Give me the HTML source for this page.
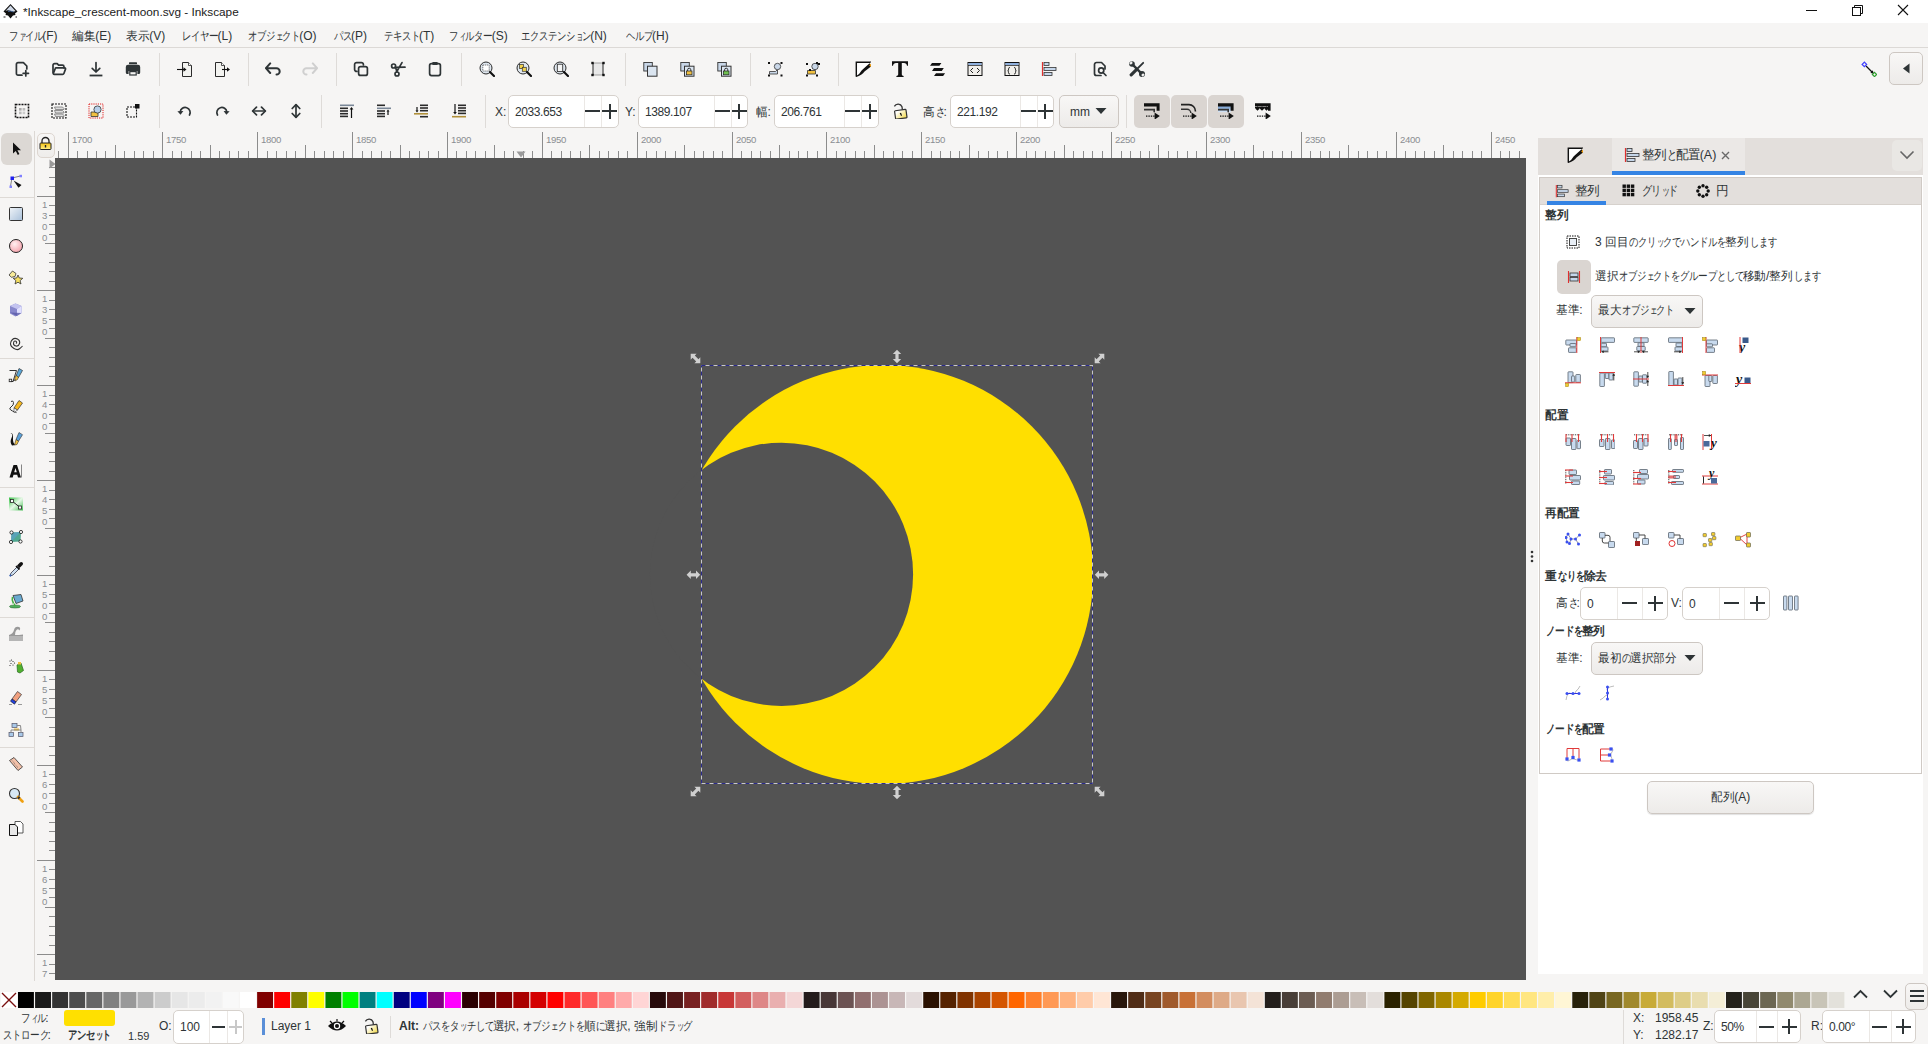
<!DOCTYPE html><html><head><meta charset="utf-8"><style>html,body{margin:0;padding:0}body{width:1928px;height:1044px;position:relative;overflow:hidden;background:#f6f5f4;font-family:"Liberation Sans",sans-serif}</style></head><body><div style="position:absolute;left:0px;top:0px;width:1928px;height:23px;background:#fff"></div>
<svg style="position:absolute;left:2px;top:3px" width="17" height="17" viewBox="0 0 17 17"><path d="M8.5 1 L1.5 8.5 L4 10.5 L3.5 12 L6 12.5 L8.5 15.5 L11 12.5 L13.5 12 L13 10.5 L15.5 8.5 Z" fill="#111"/>
<path d="M8.5 2.5 L3.5 8 Q6 6.5 8.5 8 Q11 9.5 13.5 8 Z" fill="#cfd8e6"/><path d="M6 8.5 Q8.5 7.5 11.5 9" stroke="#3a5a8a" stroke-width="1" fill="none"/>
<rect x="1.5" y="13.5" width="2" height="1" fill="#222"/><rect x="13.5" y="13.5" width="1.5" height="1" fill="#222"/></svg>
<div style="position:absolute;left:23px;top:4px;font-size:11.8px;line-height:16px;color:#1a1a1a;white-space:nowrap;">*Inkscape_crescent-moon.svg - Inkscape</div>
<div style="position:absolute;left:1806px;top:10px;width:11px;height:1px;background:#111"></div>
<svg style="position:absolute;left:1850px;top:3px" width="14" height="14" viewBox="0 0 14 14"><rect x="2.5" y="4.5" width="8" height="8" fill="none" stroke="#111" stroke-width="1"/><path d="M4.5 4.5V2.5H12.5V10.5H10.5" fill="none" stroke="#111" stroke-width="1"/></svg>
<svg style="position:absolute;left:1897px;top:4px" width="12" height="12" viewBox="0 0 12 12"><path d="M1 1L11 11M11 1L1 11" stroke="#111" stroke-width="1.1"/></svg>
<div style="position:absolute;left:8px;top:28px;font-size:12px;line-height:16px;color:#2e3436;white-space:nowrap;"><span style="display:inline-block;width:9.00px;text-align:center"><span style="display:inline-block;transform:scaleX(0.78)">フ</span></span><span style="display:inline-block;width:7.20px;text-align:center"><span style="display:inline-block;transform:scaleX(0.62)">ァ</span></span><span style="display:inline-block;width:9.00px;text-align:center"><span style="display:inline-block;transform:scaleX(0.78)">イ</span></span><span style="display:inline-block;width:9.00px;text-align:center"><span style="display:inline-block;transform:scaleX(0.78)">ル</span></span>(F)</div>
<div style="position:absolute;left:72px;top:28px;font-size:12px;line-height:16px;color:#2e3436;white-space:nowrap;"><span style="display:inline-block;width:11.60px;text-align:center"><span style="display:inline-block;transform:scaleX(0.97)">編</span></span><span style="display:inline-block;width:11.60px;text-align:center"><span style="display:inline-block;transform:scaleX(0.97)">集</span></span>(E)</div>
<div style="position:absolute;left:126px;top:28px;font-size:12px;line-height:16px;color:#2e3436;white-space:nowrap;"><span style="display:inline-block;width:11.60px;text-align:center"><span style="display:inline-block;transform:scaleX(0.97)">表</span></span><span style="display:inline-block;width:11.60px;text-align:center"><span style="display:inline-block;transform:scaleX(0.97)">示</span></span>(V)</div>
<div style="position:absolute;left:181px;top:28px;font-size:12px;line-height:16px;color:#2e3436;white-space:nowrap;"><span style="display:inline-block;width:9.00px;text-align:center"><span style="display:inline-block;transform:scaleX(0.78)">レ</span></span><span style="display:inline-block;width:9.00px;text-align:center"><span style="display:inline-block;transform:scaleX(0.78)">イ</span></span><span style="display:inline-block;width:9.00px;text-align:center"><span style="display:inline-block;transform:scaleX(0.78)">ヤ</span></span><span style="display:inline-block;width:9.50px;text-align:center"><span style="display:inline-block;transform:scaleX(0.8)">ー</span></span>(L)</div>
<div style="position:absolute;left:247px;top:28px;font-size:12px;line-height:16px;color:#2e3436;white-space:nowrap;"><span style="display:inline-block;width:9.00px;text-align:center"><span style="display:inline-block;transform:scaleX(0.78)">オ</span></span><span style="display:inline-block;width:9.00px;text-align:center"><span style="display:inline-block;transform:scaleX(0.78)">ブ</span></span><span style="display:inline-block;width:9.00px;text-align:center"><span style="display:inline-block;transform:scaleX(0.78)">ジ</span></span><span style="display:inline-block;width:7.20px;text-align:center"><span style="display:inline-block;transform:scaleX(0.62)">ェ</span></span><span style="display:inline-block;width:9.00px;text-align:center"><span style="display:inline-block;transform:scaleX(0.78)">ク</span></span><span style="display:inline-block;width:9.00px;text-align:center"><span style="display:inline-block;transform:scaleX(0.78)">ト</span></span>(O)</div>
<div style="position:absolute;left:333px;top:28px;font-size:12px;line-height:16px;color:#2e3436;white-space:nowrap;"><span style="display:inline-block;width:9.00px;text-align:center"><span style="display:inline-block;transform:scaleX(0.78)">パ</span></span><span style="display:inline-block;width:9.00px;text-align:center"><span style="display:inline-block;transform:scaleX(0.78)">ス</span></span>(P)</div>
<div style="position:absolute;left:383px;top:28px;font-size:12px;line-height:16px;color:#2e3436;white-space:nowrap;"><span style="display:inline-block;width:9.00px;text-align:center"><span style="display:inline-block;transform:scaleX(0.78)">テ</span></span><span style="display:inline-block;width:9.00px;text-align:center"><span style="display:inline-block;transform:scaleX(0.78)">キ</span></span><span style="display:inline-block;width:9.00px;text-align:center"><span style="display:inline-block;transform:scaleX(0.78)">ス</span></span><span style="display:inline-block;width:9.00px;text-align:center"><span style="display:inline-block;transform:scaleX(0.78)">ト</span></span>(T)</div>
<div style="position:absolute;left:448px;top:28px;font-size:12px;line-height:16px;color:#2e3436;white-space:nowrap;"><span style="display:inline-block;width:9.00px;text-align:center"><span style="display:inline-block;transform:scaleX(0.78)">フ</span></span><span style="display:inline-block;width:7.20px;text-align:center"><span style="display:inline-block;transform:scaleX(0.62)">ィ</span></span><span style="display:inline-block;width:9.00px;text-align:center"><span style="display:inline-block;transform:scaleX(0.78)">ル</span></span><span style="display:inline-block;width:9.00px;text-align:center"><span style="display:inline-block;transform:scaleX(0.78)">タ</span></span><span style="display:inline-block;width:9.50px;text-align:center"><span style="display:inline-block;transform:scaleX(0.8)">ー</span></span>(S)</div>
<div style="position:absolute;left:520px;top:28px;font-size:12px;line-height:16px;color:#2e3436;white-space:nowrap;"><span style="display:inline-block;width:9.00px;text-align:center"><span style="display:inline-block;transform:scaleX(0.78)">エ</span></span><span style="display:inline-block;width:9.00px;text-align:center"><span style="display:inline-block;transform:scaleX(0.78)">ク</span></span><span style="display:inline-block;width:9.00px;text-align:center"><span style="display:inline-block;transform:scaleX(0.78)">ス</span></span><span style="display:inline-block;width:9.00px;text-align:center"><span style="display:inline-block;transform:scaleX(0.78)">テ</span></span><span style="display:inline-block;width:9.00px;text-align:center"><span style="display:inline-block;transform:scaleX(0.78)">ン</span></span><span style="display:inline-block;width:9.00px;text-align:center"><span style="display:inline-block;transform:scaleX(0.78)">シ</span></span><span style="display:inline-block;width:7.20px;text-align:center"><span style="display:inline-block;transform:scaleX(0.62)">ョ</span></span><span style="display:inline-block;width:9.00px;text-align:center"><span style="display:inline-block;transform:scaleX(0.78)">ン</span></span>(N)</div>
<div style="position:absolute;left:625px;top:28px;font-size:12px;line-height:16px;color:#2e3436;white-space:nowrap;"><span style="display:inline-block;width:9.00px;text-align:center"><span style="display:inline-block;transform:scaleX(0.78)">ヘ</span></span><span style="display:inline-block;width:9.00px;text-align:center"><span style="display:inline-block;transform:scaleX(0.78)">ル</span></span><span style="display:inline-block;width:9.00px;text-align:center"><span style="display:inline-block;transform:scaleX(0.78)">プ</span></span>(H)</div>
<div style="position:absolute;left:0px;top:47px;width:1928px;height:1px;background:#dcd9d6"></div>
<div style="position:absolute;left:159px;top:53px;width:1px;height:33px;background:#dedbd8"></div>
<div style="position:absolute;left:248px;top:53px;width:1px;height:33px;background:#dedbd8"></div>
<div style="position:absolute;left:336px;top:53px;width:1px;height:33px;background:#dedbd8"></div>
<div style="position:absolute;left:461px;top:53px;width:1px;height:33px;background:#dedbd8"></div>
<div style="position:absolute;left:625px;top:53px;width:1px;height:33px;background:#dedbd8"></div>
<div style="position:absolute;left:750px;top:53px;width:1px;height:33px;background:#dedbd8"></div>
<div style="position:absolute;left:838px;top:53px;width:1px;height:33px;background:#dedbd8"></div>
<div style="position:absolute;left:1075px;top:53px;width:1px;height:33px;background:#dedbd8"></div>
<div style="position:absolute;left:159px;top:95px;width:1px;height:33px;background:#dedbd8"></div>
<div style="position:absolute;left:321px;top:95px;width:1px;height:33px;background:#dedbd8"></div>
<div style="position:absolute;left:485px;top:95px;width:1px;height:33px;background:#dedbd8"></div>
<div style="position:absolute;left:1126px;top:95px;width:1px;height:33px;background:#dedbd8"></div>
<svg style="position:absolute;left:14px;top:61px" width="16" height="16" viewBox="0 0 16 16"><path d="M8 14.2H4a1.6 1.6 0 0 1-1.6-1.6V3.2A1.6 1.6 0 0 1 4 1.6h5.4l3.4 3.4V8" fill="none" stroke="#2e3436" stroke-width="1.7" stroke-linecap="round" stroke-linejoin="round"/><path d="M11.8 9.6v5.4M9.1 12.3h5.4" fill="none" stroke="#2e3436" stroke-width="1.7" stroke-linecap="round" stroke-linejoin="round"/></svg>
<svg style="position:absolute;left:51px;top:61px" width="16" height="16" viewBox="0 0 16 16"><path d="M2 11.5V4.2A1.6 1.6 0 0 1 3.6 2.6h2.6l1.4 1.5h3.8A1.6 1.6 0 0 1 13 5.7v1.2" fill="none" stroke="#2e3436" stroke-width="1.7" stroke-linecap="round" stroke-linejoin="round"/><path d="M2.2 12.6l2-5a1 1 0 0 1 .9-.7h8.6a.9.9 0 0 1 .8 1.2l-1.6 4.4a1.4 1.4 0 0 1-1.3.9H3.6a1.4 1.4 0 0 1-1.4-.8z" fill="none" stroke="#2e3436" stroke-width="1.7" stroke-linecap="round" stroke-linejoin="round"/></svg>
<svg style="position:absolute;left:88px;top:61px" width="16" height="16" viewBox="0 0 16 16"><path d="M8 1.5v9.5M4.2 7.4L8 11l3.8-3.6" fill="none" stroke="#2e3436" stroke-width="1.7" stroke-linecap="round" stroke-linejoin="round"/><path d="M1.6 14.5h12.8" stroke="#2e3436" stroke-width="1.8"/></svg>
<svg style="position:absolute;left:125px;top:61px" width="16" height="16" viewBox="0 0 16 16"><rect x="4" y="1.2" width="8" height="2" rx=".5" fill="#2e3436"/><path d="M3 3.8h10a2.2 2.2 0 0 1 2.2 2.2v5.5a1.5 1.5 0 0 1-1.5 1.5h-1.3v-3H3.6v3H2.3A1.5 1.5 0 0 1 .8 11.5V6A2.2 2.2 0 0 1 3 3.8z" fill="#2e3436"/><rect x="4.8" y="10.6" width="6.4" height="3.4" fill="none" stroke="#2e3436" stroke-width="1.2"/></svg>
<svg style="position:absolute;left:177px;top:61px" width="16" height="16" viewBox="0 0 16 16"><g transform="translate(1,0)"><path d="M4.5 1.5h6l3 3v11h-9z" fill="#f3f3f0" stroke="#2b2b2b" stroke-width="1"/><path d="M10.5 1.5v3h3" fill="#fff" stroke="#2b2b2b" stroke-width=".8"/></g><path d="M0 8.5h8" stroke="#111" stroke-width="1.1"/><path d="M6.5 6.2l3 2.3-3 2.3z" fill="#111"/></svg>
<svg style="position:absolute;left:214px;top:61px" width="16" height="16" viewBox="0 0 16 16"><g transform="translate(-3,0)"><path d="M4.5 1.5h6l3 3v11h-9z" fill="#f3f3f0" stroke="#2b2b2b" stroke-width="1"/><path d="M10.5 1.5v3h3" fill="#fff" stroke="#2b2b2b" stroke-width=".8"/></g><path d="M8 8.5h6" stroke="#111" stroke-width="1.1"/><path d="M13 6.2l3 2.3-3 2.3z" fill="#111"/></svg>
<svg style="position:absolute;left:265px;top:61px" width="16" height="16" viewBox="0 0 16 16"><path d="M5.2 2.4L0.9 7.2l4.3 4.8M1.2 7.2h10.3a3.2 3.2 0 0 1 0 6.4" fill="none" stroke="#2e3436" stroke-width="2" stroke-linecap="round" stroke-linejoin="round"/></svg>
<svg style="position:absolute;left:302px;top:61px" width="16" height="16" viewBox="0 0 16 16"><g transform="translate(16,0) scale(-1,1)"><path d="M5.2 2.4L0.9 7.2l4.3 4.8M1.2 7.2h10.3a3.2 3.2 0 0 1 0 6.4" fill="none" stroke="#cfcfcf" stroke-width="2" stroke-linecap="round" stroke-linejoin="round"/></g></svg>
<svg style="position:absolute;left:353px;top:61px" width="16" height="16" viewBox="0 0 16 16"><rect x="5.6" y="5.6" width="8.8" height="8.8" rx="2" fill="none" stroke="#2e3436" stroke-width="1.7" stroke-linecap="round" stroke-linejoin="round"/><path d="M4 10.4H3.6A2 2 0 0 1 1.6 8.4V3.6A2 2 0 0 1 3.6 1.6h4.8a2 2 0 0 1 2 2V4" fill="none" stroke="#2e3436" stroke-width="1.7" stroke-linecap="round" stroke-linejoin="round"/></svg>
<svg style="position:absolute;left:390px;top:61px" width="16" height="16" viewBox="0 0 16 16"><circle cx="3.6" cy="5" r="2" fill="none" stroke="#2e3436" stroke-width="1.7" stroke-linecap="round" stroke-linejoin="round" stroke-width="1.5"/><circle cx="7" cy="13" r="2" fill="none" stroke="#2e3436" stroke-width="1.7" stroke-linecap="round" stroke-linejoin="round" stroke-width="1.5"/><path d="M5.2 6.3L15 6.2M6.5 11L12 1.6M5.6 6.6L7 11" fill="none" stroke="#2e3436" stroke-width="1.7" stroke-linecap="round" stroke-linejoin="round" stroke-width="1.5"/></svg>
<svg style="position:absolute;left:427px;top:61px" width="16" height="16" viewBox="0 0 16 16"><rect x="2.6" y="2.6" width="10.8" height="12" rx="2" fill="none" stroke="#2e3436" stroke-width="1.7" stroke-linecap="round" stroke-linejoin="round"/><rect x="5.2" y="1" width="5.6" height="3" rx="1" fill="#2e3436"/></svg>
<svg style="position:absolute;left:479px;top:61px" width="16" height="16" viewBox="0 0 16 16"><circle cx="7" cy="7" r="6" fill="#dfe7ef" stroke="#2b2b2b" stroke-width="1"/><rect x="3.8" y="4" width="6.4" height="6" fill="#fff" stroke="#333" stroke-width=".8" stroke-dasharray="1 1"/><path d="M11 11l4 4" stroke="#111" stroke-width="2.2" stroke-linecap="round"/></svg>
<svg style="position:absolute;left:516px;top:61px" width="16" height="16" viewBox="0 0 16 16"><circle cx="7" cy="7" r="6" fill="#dfe7ef" stroke="#2b2b2b" stroke-width="1"/><rect x="3.5" y="3.5" width="4" height="4" fill="#f2d24a" stroke="#333" stroke-width=".7"/><rect x="6.3" y="6.3" width="4" height="4" fill="#f2d24a" stroke="#333" stroke-width=".7"/><path d="M11 11l4 4" stroke="#111" stroke-width="2.2" stroke-linecap="round"/></svg>
<svg style="position:absolute;left:553px;top:61px" width="16" height="16" viewBox="0 0 16 16"><circle cx="7" cy="7" r="6" fill="#dfe7ef" stroke="#2b2b2b" stroke-width="1"/><rect x="4.3" y="3.2" width="5.4" height="7.4" fill="#f6f6f6" stroke="#333" stroke-width=".9"/><path d="M11 11l4 4" stroke="#111" stroke-width="2.2" stroke-linecap="round"/></svg>
<svg style="position:absolute;left:590px;top:61px" width="16" height="16" viewBox="0 0 16 16"><rect x="3" y="2" width="10" height="12" fill="#e8e8e8" stroke="#666" stroke-width=".6"/><path d="M3 2v12M13 2v12" stroke="#333" stroke-width=".8"/><rect x="1.3" y="0.8" width="2.4" height="2.4" fill="#111"/><rect x="12.3" y="0.8" width="2.4" height="2.4" fill="#111"/><rect x="1.3" y="12.8" width="2.4" height="2.4" fill="#111"/><rect x="12.3" y="12.8" width="2.4" height="2.4" fill="#111"/></svg>
<svg style="position:absolute;left:642px;top:61px" width="16" height="16" viewBox="0 0 16 16"><rect x="1.8" y="1.5" width="8.5" height="8.5" fill="#c9d7e8" stroke="#333" stroke-width=".9"/><rect x="5.5" y="5.2" width="9.5" height="10" fill="#dbe5f0" stroke="#333" stroke-width="1"/></svg>
<svg style="position:absolute;left:679px;top:61px" width="16" height="16" viewBox="0 0 16 16"><rect x="1.8" y="1.5" width="8.5" height="8.5" fill="#c9d7e8" stroke="#333" stroke-width=".9"/><rect x="5.5" y="5.2" width="9.5" height="10" fill="#dbe5f0" stroke="#333" stroke-width="1"/><rect x="7.4" y="10" width="5.6" height="3.8" fill="#f0c040" stroke="#222" stroke-width=".7"/><path d="M8.6 10V8.8a1.6 1.6 0 0 1 3.2 0V10" fill="none" stroke="#222" stroke-width=".9"/></svg>
<svg style="position:absolute;left:716px;top:61px" width="16" height="16" viewBox="0 0 16 16"><rect x="1.8" y="1.5" width="8.5" height="8.5" fill="#c9d7e8" stroke="#333" stroke-width=".9"/><rect x="5.5" y="5.2" width="9.5" height="10" fill="#dbe5f0" stroke="#333" stroke-width="1"/><rect x="7.4" y="10" width="5.6" height="3.8" fill="#70c050" stroke="#222" stroke-width=".7"/><path d="M8.6 10V8.8a1.6 1.6 0 0 1 3.2 0V10" fill="none" stroke="#222" stroke-width=".9"/></svg>
<svg style="position:absolute;left:767px;top:61px" width="16" height="16" viewBox="0 0 16 16"><path d="M2.5 10.5h6l2-2V13h-8z" fill="#c9d7e8" stroke="#333" stroke-width=".8"/><circle cx="10.5" cy="5.5" r="3.2" fill="#c9d7e8" stroke="#333" stroke-width=".8"/><rect x="1" y="1" width="2" height="2" fill="#111"/><rect x="13.5" y="1" width="2" height="2" fill="#111"/><rect x="1" y="13.5" width="2" height="2" fill="#111"/><rect x="13.5" y="13.5" width="2" height="2" fill="#111"/></svg>
<svg style="position:absolute;left:805px;top:61px" width="16" height="16" viewBox="0 0 16 16"><path d="M2.5 9.5h8V13h-8z" fill="#f0c040" stroke="#333" stroke-width=".8"/><circle cx="10" cy="5.5" r="3.2" fill="#c9d7e8" stroke="#333" stroke-width=".8"/><rect x="1" y="2" width="2" height="2" fill="#111"/><rect x="13" y="2" width="2" height="2" fill="#111"/><rect x="1" y="13.5" width="2" height="2" fill="#111"/><rect x="11" y="13.5" width="2" height="2" fill="#111"/><rect x="11" y="1" width="2" height="2" fill="#111"/><rect x="4" y="8" width="2" height="2" fill="#111"/></svg>
<svg style="position:absolute;left:855px;top:61px" width="16" height="16" viewBox="0 0 16 16"><path d="M0.6 0.4h15.8l-1.2 1.6H2.1v13.6H0.6z" fill="#111"/><path d="M2.1 2h13.1L2.1 15.2z" fill="#fff"/><path d="M14.6 2.2L16.4 5.2 9.5 10.5Q7 14.5 1 15.9L.8 15.2Q5 12.8 6.8 9.2z" fill="#111"/><path d="M14.2 4.6l2.3-2.6v4.4z" fill="#f5a010"/></svg>
<svg style="position:absolute;left:892px;top:61px" width="16" height="16" viewBox="0 0 16 16"><path d="M0 0.2h16v4.6h-1Q14.5 2 12 2H9.8v11.4q0 1.3 1.8 1.5v1.1H4.4v-1.1q1.8-.2 1.8-1.5V2H4Q1.5 2 1 4.8H0z" fill="#111"/></svg>
<svg style="position:absolute;left:930px;top:61px" width="16" height="16" viewBox="0 0 16 16"><path d="M2 2H11.4L9.4 4.8H0z M4 7.1h9.8l-2 2.9H2z M6 12.2h9.1l-2 2.9H4z" fill="#111"/></svg>
<svg style="position:absolute;left:967px;top:61px" width="16" height="16" viewBox="0 0 16 16"><rect x="1" y="1.5" width="14" height="13" fill="#f1efeb" stroke="#111" stroke-width="1"/><rect x="1.5" y="2" width="13" height="2" fill="#8fb0dd"/><path d="M1 4.5h14" stroke="#111" stroke-width=".7"/><path d="M6 7l-2.5 2.5L6 12M10 7l2.5 2.5L10 12" fill="none" stroke="#222" stroke-width="1"/></svg>
<svg style="position:absolute;left:1004px;top:61px" width="16" height="16" viewBox="0 0 16 16"><rect x="1" y="1.5" width="14" height="13" fill="#f1efeb" stroke="#111" stroke-width="1"/><rect x="1.5" y="2" width="13" height="2" fill="#8fb0dd"/><path d="M1 4.5h14" stroke="#111" stroke-width=".7"/><path d="M6 6.5q-1.5 0-1.5 1.3v1.2q0 .8-.8.8.8 0 .8.8v1.2q0 1.3 1.5 1.3M10 6.5q1.5 0 1.5 1.3v1.2q0 .8.8.8-.8 0-.8.8v1.2q0 1.3-1.5 1.3" fill="none" stroke="#222" stroke-width=".9"/></svg>
<svg style="position:absolute;left:1041px;top:61px" width="16" height="16" viewBox="0 0 16 16"><path d="M1.5 1v14" stroke="#e03030" stroke-width="1.2"/><rect x="3" y="1.5" width="5" height="3" fill="#c5d6ea" stroke="#333" stroke-width=".8"/><rect x="3" y="6.5" width="12" height="3" fill="#c5d6ea" stroke="#333" stroke-width=".8"/><rect x="3" y="11.5" width="8" height="3" fill="#c5d6ea" stroke="#333" stroke-width=".8"/></svg>
<svg style="position:absolute;left:1092px;top:61px" width="16" height="16" viewBox="0 0 16 16"><path d="M9 14.5H4.5a2 2 0 0 1-2-2v-9a2 2 0 0 1 2-2h5l3.5 3.5v3" fill="none" stroke="#2e3436" stroke-width="1.7" stroke-linecap="round" stroke-linejoin="round"/><circle cx="9.2" cy="9.5" r="2.6" fill="none" stroke="#2e3436" stroke-width="1.7" stroke-linecap="round" stroke-linejoin="round" stroke-width="1.6"/><path d="M11 11.5l3 3" fill="none" stroke="#2e3436" stroke-width="1.7" stroke-linecap="round" stroke-linejoin="round" stroke-width="1.8"/></svg>
<svg style="position:absolute;left:1129px;top:61px" width="16" height="16" viewBox="0 0 16 16"><path d="M3.2 3.2L12.8 12.8" stroke="#2e3436" stroke-width="2.4" stroke-linecap="round"/><circle cx="3" cy="3" r="2.8" fill="#2e3436"/><circle cx="13" cy="13" r="3" fill="#2e3436"/><path d="M.3 2.2L2.2 .3 3.8 1.9 1.9 3.8z" fill="#f6f5f4"/><path d="M15.7 13.8L13.8 15.7 12.2 14.1 14.1 12.2z" fill="#f6f5f4"/><path d="M2.2 13.8L7.2 8.8" stroke="#2e3436" stroke-width="3.2" stroke-linecap="round"/><path d="M7 9L14.2 1.8" stroke="#2e3436" stroke-width="1.8" stroke-linecap="round"/></svg>
<svg style="position:absolute;left:1861px;top:61px" width="16" height="16" viewBox="0 0 16 16"><path d="M5 5l7 7" stroke="#111" stroke-width="1.2"/><path d="M12.5 12.5l-3.2-.6 2.6-2.6z" fill="#111"/><rect x="1.8" y="1.8" width="3.2" height="3.2" transform="rotate(45 3.4 3.4)" fill="none" stroke="#4040ff" stroke-width="1.2"/><rect x="12" y="12" width="3" height="3" transform="rotate(45 13.5 13.5)" fill="none" stroke="#30a030" stroke-width="1.2"/></svg>
<div style="position:absolute;left:1889px;top:52px;width:34px;height:33px;background:linear-gradient(#f8f7f6,#edebe9);border:1px solid #cdc7c2;border-radius:5px;box-sizing:border-box"></div>
<svg style="position:absolute;left:1900px;top:62px" width="12" height="13" viewBox="0 0 12 13"><path d="M9.5 1.5L3 6.5l6.5 5z" fill="#2e3436"/></svg>
<svg style="position:absolute;left:14px;top:103px" width="16" height="16" viewBox="0 0 16 16"><rect x="1.5" y="1.5" width="13" height="13" fill="none" stroke="#111" stroke-width="1.6" stroke-dasharray="2 1"/><rect x="5" y="5" width="2.6" height="2.6" fill="#aaa"/><rect x="8.6" y="5" width="2.6" height="2.6" fill="#bbb"/><rect x="5" y="8.6" width="2.6" height="2.6" fill="#bbb"/><rect x="8.6" y="8.6" width="2.6" height="2.6" fill="#ccc"/></svg>
<svg style="position:absolute;left:51px;top:103px" width="16" height="16" viewBox="0 0 16 16"><rect x="1" y="1" width="14" height="14" fill="none" stroke="#111" stroke-width="1.1" stroke-dasharray="2 1"/><path d="M3.5 4h8l1.5 1.5v1H4.5zM3.5 7.5h8l1.5 1.5v1H4.5zM3.5 11h8l1.5 1.5v1H4.5z" fill="#ddd" stroke="#555" stroke-width=".6"/></svg>
<svg style="position:absolute;left:88px;top:103px" width="16" height="16" viewBox="0 0 16 16"><rect x="1" y="1" width="14" height="14" fill="none" stroke="#e02020" stroke-width="1" stroke-dasharray="1.2 1"/><path d="M3 9h6l1 1v3.5H3z" fill="#f0c040" stroke="#333" stroke-width=".8"/><circle cx="9.5" cy="6.5" r="3.6" fill="#b8d0ea" stroke="#333" stroke-width=".8"/></svg>
<svg style="position:absolute;left:125px;top:103px" width="16" height="16" viewBox="0 0 16 16"><rect x="2" y="4" width="9.5" height="10" fill="none" stroke="#111" stroke-width="1.1" stroke-dasharray="2 1"/><rect x="10" y="1" width="4.5" height="4.5" fill="#111"/></svg>
<svg style="position:absolute;left:177px;top:103px" width="16" height="16" viewBox="0 0 16 16"><path d="M3.2 9A5 5 0 1 1 12.5 12" fill="none" stroke="#2e3436" stroke-width="1.7" stroke-linecap="round" stroke-linejoin="round" stroke-width="2"/><path d="M.4 8.2l3.2 3.6 2.8-3.8z" fill="#2e3436"/></svg>
<svg style="position:absolute;left:214px;top:103px" width="16" height="16" viewBox="0 0 16 16"><g transform="translate(16,0) scale(-1,1)"><path d="M3.2 9A5 5 0 1 1 12.5 12" fill="none" stroke="#2e3436" stroke-width="1.7" stroke-linecap="round" stroke-linejoin="round" stroke-width="2"/><path d="M.4 8.2l3.2 3.6 2.8-3.8z" fill="#2e3436"/></g></svg>
<svg style="position:absolute;left:251px;top:103px" width="16" height="16" viewBox="0 0 16 16"><path d="M2 8h12" fill="none" stroke="#2e3436" stroke-width="1.7" stroke-linecap="round" stroke-linejoin="round" stroke-width="2"/><path d="M5.5 4.2L1.6 8l3.9 3.8M10.5 4.2L14.4 8l-3.9 3.8" fill="none" stroke="#2e3436" stroke-width="1.7" stroke-linecap="round" stroke-linejoin="round" stroke-width="2"/></svg>
<svg style="position:absolute;left:288px;top:103px" width="16" height="16" viewBox="0 0 16 16"><g transform="rotate(90 8 8)"><path d="M2 8h12" fill="none" stroke="#2e3436" stroke-width="1.7" stroke-linecap="round" stroke-linejoin="round" stroke-width="2"/><path d="M5.5 4.2L1.6 8l3.9 3.8M10.5 4.2L14.4 8l-3.9 3.8" fill="none" stroke="#2e3436" stroke-width="1.7" stroke-linecap="round" stroke-linejoin="round" stroke-width="2"/></g></svg>
<svg style="position:absolute;left:339px;top:103px" width="16" height="16" viewBox="0 0 16 16"><rect x="1" y="1.5" width="14" height="1.6" fill="#7a8797"/><rect x="1" y="4.5" width="8" height="1.6" fill="#2a2a2a"/><rect x="1" y="7.2" width="8" height="1.6" fill="#2a2a2a"/><rect x="1" y="9.9" width="8" height="1.6" fill="#2a2a2a"/><rect x="1" y="12.6" width="8" height="1.6" fill="#2a2a2a"/><path d="M12.5 15V5" stroke="#111" stroke-width="1.2"/><path d="M10.6 6.5l1.9-2.6 1.9 2.6z" fill="#111"/></svg>
<svg style="position:absolute;left:376px;top:103px" width="16" height="16" viewBox="0 0 16 16"><rect x="1" y="1.5" width="8" height="1.6" fill="#2a2a2a"/><rect x="1" y="4.5" width="14" height="1.6" fill="#7a8797"/><rect x="1" y="9.9" width="8" height="1.6" fill="#2a2a2a"/><rect x="1" y="12.6" width="8" height="1.6" fill="#2a2a2a"/><rect x="1" y="7.2" width="8" height="1.6" fill="#2a2a2a"/><path d="M12 12V8" stroke="#111" stroke-width="1.2"/><path d="M10.5 8.5l1.5-2 1.5 2z" fill="#111"/></svg>
<svg style="position:absolute;left:413px;top:103px" width="16" height="16" viewBox="0 0 16 16"><rect x="7" y="1.5" width="8" height="1.6" fill="#2a2a2a"/><rect x="7" y="4.2" width="8" height="1.6" fill="#2a2a2a"/><rect x="7" y="6.9" width="8" height="1.6" fill="#2a2a2a"/><rect x="1" y="10" width="14" height="1.6" fill="#b0903a"/><rect x="7" y="12.9" width="8" height="1.6" fill="#2a2a2a"/><path d="M4 4v4" stroke="#111" stroke-width="1.2"/><path d="M2.5 7.5l1.5 2 1.5-2z" fill="#111"/></svg>
<svg style="position:absolute;left:451px;top:103px" width="16" height="16" viewBox="0 0 16 16"><rect x="7" y="1.5" width="8" height="1.6" fill="#2a2a2a"/><rect x="7" y="4.2" width="8" height="1.6" fill="#2a2a2a"/><rect x="7" y="6.9" width="8" height="1.6" fill="#2a2a2a"/><rect x="7" y="9.6" width="8" height="1.6" fill="#2a2a2a"/><rect x="1" y="12.9" width="14" height="1.6" fill="#b0903a"/><path d="M4 1v9" stroke="#111" stroke-width="1.2"/><path d="M2.2 9l1.8 2.6L5.8 9z" fill="#111"/></svg>
<svg style="position:absolute;left:893px;top:103px" width="16" height="16" viewBox="0 0 16 16"><defs><linearGradient id="ulg" x1="0" y1="0" x2="1" y2="1"><stop offset=".2" stop-color="#ffffff"/><stop offset="1" stop-color="#f2d840"/></linearGradient></defs><g transform="rotate(-8 8 11)"><rect x="2" y="7" width="11.5" height="8.5" rx=".8" fill="url(#ulg)" stroke="#333" stroke-width="1.2"/><path d="M2.5 2.5a4.2 4.2 0 0 1 7.5 1.5V7" fill="none" stroke="#333" stroke-width="1.3"/><path d="M6.8 10l1.4-.3.6 3-1 .2z" fill="#111"/></g></svg>
<div style="position:absolute;left:495px;top:104px;font-size:12px;line-height:16px;color:#2e3436;white-space:nowrap;">X:</div>
<div style="position:absolute;left:508px;top:95px;width:111px;height:33px;background:#fff;border:1px solid #d6d1cc;border-radius:5px;box-sizing:border-box"></div>
<div style="position:absolute;left:584px;top:96px;width:1px;height:31px;background:#ebe8e5"></div>
<div style="position:absolute;left:601px;top:96px;width:1px;height:31px;background:#ebe8e5"></div>
<div style="position:absolute;left:515px;top:104px;font-size:12px;line-height:16px;color:#2e3436;white-space:nowrap;letter-spacing:-0.4px">2033.653</div>
<div style="position:absolute;left:585px;top:110px;width:15px;height:2px;background:#2e3436"></div>
<div style="position:absolute;left:602px;top:110px;width:15px;height:2px;background:#2e3436"></div>
<div style="position:absolute;left:609px;top:104px;width:2px;height:15px;background:#2e3436"></div>
<div style="position:absolute;left:625px;top:104px;font-size:12px;line-height:16px;color:#2e3436;white-space:nowrap;">Y:</div>
<div style="position:absolute;left:638px;top:95px;width:110px;height:33px;background:#fff;border:1px solid #d6d1cc;border-radius:5px;box-sizing:border-box"></div>
<div style="position:absolute;left:714px;top:96px;width:1px;height:31px;background:#ebe8e5"></div>
<div style="position:absolute;left:731px;top:96px;width:1px;height:31px;background:#ebe8e5"></div>
<div style="position:absolute;left:645px;top:104px;font-size:12px;line-height:16px;color:#2e3436;white-space:nowrap;letter-spacing:-0.4px">1389.107</div>
<div style="position:absolute;left:715px;top:110px;width:15px;height:2px;background:#2e3436"></div>
<div style="position:absolute;left:732px;top:110px;width:15px;height:2px;background:#2e3436"></div>
<div style="position:absolute;left:738px;top:104px;width:2px;height:15px;background:#2e3436"></div>
<div style="position:absolute;left:756px;top:104px;font-size:12px;line-height:16px;color:#2e3436;white-space:nowrap;"><span style="display:inline-block;width:11.60px;text-align:center"><span style="display:inline-block;transform:scaleX(0.97)">幅</span></span>:</div>
<div style="position:absolute;left:774px;top:95px;width:105px;height:33px;background:#fff;border:1px solid #d6d1cc;border-radius:5px;box-sizing:border-box"></div>
<div style="position:absolute;left:844px;top:96px;width:1px;height:31px;background:#ebe8e5"></div>
<div style="position:absolute;left:861px;top:96px;width:1px;height:31px;background:#ebe8e5"></div>
<div style="position:absolute;left:781px;top:104px;font-size:12px;line-height:16px;color:#2e3436;white-space:nowrap;letter-spacing:-0.4px">206.761</div>
<div style="position:absolute;left:845px;top:110px;width:15px;height:2px;background:#2e3436"></div>
<div style="position:absolute;left:862px;top:110px;width:15px;height:2px;background:#2e3436"></div>
<div style="position:absolute;left:869px;top:104px;width:2px;height:15px;background:#2e3436"></div>
<div style="position:absolute;left:923px;top:104px;font-size:12px;line-height:16px;color:#2e3436;white-space:nowrap;"><span style="display:inline-block;width:11.60px;text-align:center"><span style="display:inline-block;transform:scaleX(0.97)">高</span></span><span style="display:inline-block;width:9.00px;text-align:center"><span style="display:inline-block;transform:scaleX(0.78)">さ</span></span>:</div>
<div style="position:absolute;left:950px;top:95px;width:104px;height:33px;background:#fff;border:1px solid #d6d1cc;border-radius:5px;box-sizing:border-box"></div>
<div style="position:absolute;left:1020px;top:96px;width:1px;height:31px;background:#ebe8e5"></div>
<div style="position:absolute;left:1037px;top:96px;width:1px;height:31px;background:#ebe8e5"></div>
<div style="position:absolute;left:957px;top:104px;font-size:12px;line-height:16px;color:#2e3436;white-space:nowrap;letter-spacing:-0.4px">221.192</div>
<div style="position:absolute;left:1021px;top:110px;width:15px;height:2px;background:#2e3436"></div>
<div style="position:absolute;left:1038px;top:110px;width:15px;height:2px;background:#2e3436"></div>
<div style="position:absolute;left:1044px;top:104px;width:2px;height:15px;background:#2e3436"></div>
<div style="position:absolute;left:1059px;top:95px;width:60px;height:33px;background:linear-gradient(#f8f7f6,#edebe9);border:1px solid #cdc7c2;border-radius:5px;box-sizing:border-box"></div>
<div style="position:absolute;left:1070px;top:104px;font-size:12px;line-height:16px;color:#2e3436;white-space:nowrap;">mm</div>
<svg style="position:absolute;left:1095px;top:107px" width="12" height="8" viewBox="0 0 12 8"><path d="M0.5 1h11L6 7z" fill="#2e3436"/></svg>
<div style="position:absolute;left:1134px;top:95px;width:36px;height:33px;background:#dad5d1;border-radius:5px"></div>
<svg style="position:absolute;left:1144px;top:103px" width="16" height="16" viewBox="0 0 16 16"><path d="M0 0.3h15.6v7.4h-3V3.4H0z" fill="#111"/><path d="M0 5.7h11v3.5H9.4V7.4H0z" fill="#333"/><path d="M2 13.1h9" stroke="#111" stroke-width="1.3" stroke-dasharray="1.4 1"/><path d="M10.6 9.6l5.2 3.5-5.2 3.5z" fill="#111"/></svg>
<div style="position:absolute;left:1171px;top:95px;width:36px;height:33px;background:#dad5d1;border-radius:5px"></div>
<svg style="position:absolute;left:1181px;top:103px" width="16" height="16" viewBox="0 0 16 16"><path d="M0 1.6h8a6.4 6.4 0 0 1 6.4 6.4v.5" fill="none" stroke="#222" stroke-width="1.6"/><path d="M0 6.3h6a3.8 3.8 0 0 1 3.8 3.8" fill="none" stroke="#333" stroke-width="1.4"/><path d="M2 13.1h9" stroke="#111" stroke-width="1.3" stroke-dasharray="1.4 1"/><path d="M10.6 9.6l5.2 3.5-5.2 3.5z" fill="#111"/></svg>
<div style="position:absolute;left:1208px;top:95px;width:36px;height:33px;background:#dad5d1;border-radius:5px"></div>
<svg style="position:absolute;left:1218px;top:103px" width="16" height="16" viewBox="0 0 16 16"><defs><linearGradient id="t3g" x1="0" y1="0" x2="0" y2="1"><stop offset="0" stop-color="#6f9ad0"/><stop offset="1" stop-color="#d8e6f4"/></linearGradient></defs><rect x="0" y="3.2" width="12.8" height="6" fill="url(#t3g)"/><path d="M0 0.3h15.6v7.4h-3V3.4H0z" fill="#111"/><path d="M0 5.7h11v3.5H9.4V7.4H0z" fill="#333"/><path d="M2 13.1h9" stroke="#111" stroke-width="1.3" stroke-dasharray="1.4 1"/><path d="M10.6 9.6l5.2 3.5-5.2 3.5z" fill="#111"/></svg>
<svg style="position:absolute;left:1255px;top:103px" width="16" height="16" viewBox="0 0 16 16"><path d="M0 0.3h15.6v7.4h-2.6V3.4H0z" fill="#111"/><path d="M2.5 3.2l2.3 2.3-2.3 2.3-2.3-2.3z" fill="#111"/><path d="M7 3.2l2.3 2.3-2.3 2.3-2.3-2.3z" fill="#111"/><path d="M11.5 3.2l2.3 2.3-2.3 2.3-2.3-2.3z" fill="#111"/><path d="M0 4.5h13" stroke="#111" stroke-width="1"/><path d="M2 13.1h9" stroke="#111" stroke-width="1.3" stroke-dasharray="1.4 1"/><path d="M10.6 9.6l5.2 3.5-5.2 3.5z" fill="#111"/></svg>
<div style="position:absolute;left:34px;top:131px;width:1px;height:850px;background:#dcd8d4"></div>
<div style="position:absolute;left:37px;top:133px;width:18px;height:25px;background:linear-gradient(#f8f7f6,#eeecea);border:1px solid #ddd6d0;border-radius:5px;box-sizing:border-box"></div>
<svg style="position:absolute;left:38px;top:136px" width="15" height="15" viewBox="0 0 15 15"><defs><linearGradient id="lg" x1="0" y1="0" x2="0" y2="1"><stop offset="0" stop-color="#f4c010"/><stop offset="1" stop-color="#fff08a"/></linearGradient></defs><path d="M4 7V5a3.5 3.5 0 0 1 7 0v2" fill="none" stroke="#222" stroke-width="1.3"/><rect x="2" y="7" width="11" height="6.5" rx=".8" fill="url(#lg)" stroke="#222" stroke-width="1"/><path d="M7.5 9v2.5" stroke="#222" stroke-width="1.4"/></svg>
<svg style="position:absolute;left:0;top:0" width="1928" height="1044"><path d="M58.5 151V158M68.5 132V158M77.5 151V158M87.5 151V158M96.5 151V158M105.5 151V158M115.5 145V158M124.5 151V158M134.5 151V158M143.5 151V158M153.5 151V158M162.5 132V158M172.5 151V158M181.5 151V158M191.5 151V158M200.5 151V158M210.5 145V158M219.5 151V158M229.5 151V158M238.5 151V158M248.5 151V158M257.5 132V158M267.5 151V158M276.5 151V158M286.5 151V158M295.5 151V158M305.5 145V158M314.5 151V158M324.5 151V158M333.5 151V158M343.5 151V158M352.5 132V158M362.5 151V158M371.5 151V158M381.5 151V158M390.5 151V158M400.5 145V158M409.5 151V158M419.5 151V158M428.5 151V158M438.5 151V158M447.5 132V158M456.5 151V158M466.5 151V158M475.5 151V158M485.5 151V158M494.5 145V158M504.5 151V158M513.5 151V158M523.5 151V158M532.5 151V158M542.5 132V158M551.5 151V158M561.5 151V158M570.5 151V158M580.5 151V158M589.5 145V158M599.5 151V158M608.5 151V158M618.5 151V158M627.5 151V158M637.5 132V158M646.5 151V158M656.5 151V158M665.5 151V158M675.5 151V158M684.5 145V158M694.5 151V158M703.5 151V158M713.5 151V158M722.5 151V158M732.5 132V158M741.5 151V158M751.5 151V158M760.5 151V158M770.5 151V158M779.5 145V158M789.5 151V158M798.5 151V158M807.5 151V158M817.5 151V158M826.5 132V158M836.5 151V158M845.5 151V158M855.5 151V158M864.5 151V158M874.5 145V158M883.5 151V158M893.5 151V158M902.5 151V158M912.5 151V158M921.5 132V158M931.5 151V158M940.5 151V158M950.5 151V158M959.5 151V158M969.5 145V158M978.5 151V158M988.5 151V158M997.5 151V158M1007.5 151V158M1016.5 132V158M1026.5 151V158M1035.5 151V158M1045.5 151V158M1054.5 151V158M1064.5 145V158M1073.5 151V158M1083.5 151V158M1092.5 151V158M1102.5 151V158M1111.5 132V158M1121.5 151V158M1130.5 151V158M1140.5 151V158M1149.5 151V158M1158.5 145V158M1168.5 151V158M1177.5 151V158M1187.5 151V158M1196.5 151V158M1206.5 132V158M1215.5 151V158M1225.5 151V158M1234.5 151V158M1244.5 151V158M1253.5 145V158M1263.5 151V158M1272.5 151V158M1282.5 151V158M1291.5 151V158M1301.5 132V158M1310.5 151V158M1320.5 151V158M1329.5 151V158M1339.5 151V158M1348.5 145V158M1358.5 151V158M1367.5 151V158M1377.5 151V158M1386.5 151V158M1396.5 132V158M1405.5 151V158M1415.5 151V158M1424.5 151V158M1434.5 151V158M1443.5 145V158M1453.5 151V158M1462.5 151V158M1472.5 151V158M1481.5 151V158M1491.5 132V158M1500.5 151V158M1509.5 151V158M1519.5 151V158" stroke="#8c8c8c" stroke-width="1"/><g font-family="Liberation Sans, sans-serif" font-size="9.6" letter-spacing="-0.3" fill="#8a8e92"><text x="72" y="142.8">1700</text><text x="166" y="142.8">1750</text><text x="261" y="142.8">1800</text><text x="356" y="142.8">1850</text><text x="451" y="142.8">1900</text><text x="546" y="142.8">1950</text><text x="641" y="142.8">2000</text><text x="736" y="142.8">2050</text><text x="830" y="142.8">2100</text><text x="925" y="142.8">2150</text><text x="1020" y="142.8">2200</text><text x="1115" y="142.8">2250</text><text x="1210" y="142.8">2300</text><text x="1305" y="142.8">2350</text><text x="1400" y="142.8">2400</text><text x="1495" y="142.8">2450</text></g></svg>
<svg style="position:absolute;left:0;top:0" width="1928" height="1044"><defs><clipPath id="vr"><rect x="35" y="158" width="20" height="822"/></clipPath></defs><g clip-path="url(#vr)"><path d="M49 167.5H55M49 177.5H55M49 186.5H55M37 196.5H55M49 205.5H55M49 215.5H55M49 224.5H55M49 234.5H55M45 243.5H55M49 253.5H55M49 262.5H55M49 271.5H55M49 281.5H55M37 290.5H55M49 300.5H55M49 309.5H55M49 319.5H55M49 328.5H55M45 338.5H55M49 347.5H55M49 357.5H55M49 366.5H55M49 376.5H55M37 385.5H55M49 395.5H55M49 404.5H55M49 414.5H55M49 423.5H55M45 433.5H55M49 442.5H55M49 452.5H55M49 461.5H55M49 471.5H55M37 480.5H55M49 490.5H55M49 499.5H55M49 509.5H55M49 518.5H55M45 528.5H55M49 537.5H55M49 547.5H55M49 556.5H55M49 566.5H55M37 575.5H55M49 584.5H55M49 594.5H55M49 603.5H55M49 613.5H55M45 622.5H55M49 632.5H55M49 641.5H55M49 651.5H55M49 660.5H55M37 670.5H55M49 679.5H55M49 689.5H55M49 698.5H55M49 708.5H55M45 717.5H55M49 727.5H55M49 736.5H55M49 746.5H55M49 755.5H55M37 765.5H55M49 774.5H55M49 784.5H55M49 793.5H55M49 803.5H55M45 812.5H55M49 822.5H55M49 831.5H55M49 841.5H55M49 850.5H55M37 860.5H55M49 869.5H55M49 879.5H55M49 888.5H55M49 897.5H55M45 907.5H55M49 916.5H55M49 926.5H55M49 935.5H55M49 945.5H55M37 954.5H55M49 964.5H55M49 973.5H55" stroke="#8c8c8c" stroke-width="1"/><g font-family="Liberation Sans, sans-serif" font-size="9.6" letter-spacing="-0.3" fill="#8a8e92"><text x="42" y="207.5">1</text><text x="42" y="218.7">3</text><text x="42" y="229.9">0</text><text x="42" y="241.1">0</text><text x="42" y="301.5">1</text><text x="42" y="312.7">3</text><text x="42" y="323.9">5</text><text x="42" y="335.1">0</text><text x="42" y="396.5">1</text><text x="42" y="407.7">4</text><text x="42" y="418.9">0</text><text x="42" y="430.1">0</text><text x="42" y="491.5">1</text><text x="42" y="502.7">4</text><text x="42" y="513.9">5</text><text x="42" y="525.1">0</text><text x="42" y="586.5">1</text><text x="42" y="597.7">5</text><text x="42" y="608.9">0</text><text x="42" y="620.1">0</text><text x="42" y="681.5">1</text><text x="42" y="692.7">5</text><text x="42" y="703.9">5</text><text x="42" y="715.1">0</text><text x="42" y="776.5">1</text><text x="42" y="787.7">6</text><text x="42" y="798.9">0</text><text x="42" y="810.1">0</text><text x="42" y="871.5">1</text><text x="42" y="882.7">6</text><text x="42" y="893.9">5</text><text x="42" y="905.1">0</text><text x="42" y="965.5">1</text><text x="42" y="976.7">7</text><text x="42" y="987.9">0</text><text x="42" y="999.1">0</text></g></g></svg>
<div style="position:absolute;left:55px;top:158px;width:1471px;height:822px;background:#535353"></div>
<svg style="position:absolute;left:516px;top:151px" width="10" height="7" viewBox="0 0 10 7"><path d="M0.5 0.5h9L5 6.5z" fill="#9a9a9a"/></svg>
<svg style="position:absolute;left:49px;top:159px" width="7" height="10" viewBox="0 0 7 10"><path d="M0.5 0.5v9L6.5 5z" fill="#9a9a9a"/></svg>
<svg style="position:absolute;left:0;top:0" width="1928" height="1044"><defs><clipPath id="cv"><rect x="55" y="158" width="1471" height="822"/></clipPath></defs><g clip-path="url(#cv)"><circle cx="883.5" cy="574.5" r="209.6" fill="#ffdf00"/>
<circle cx="781.5" cy="574.3" r="131.6" fill="#535353"/>
<rect x="701.5" y="365.5" width="391" height="418" fill="none" stroke="#c8c8c8" stroke-width="1"/>
<rect x="701.5" y="365.5" width="391" height="418" fill="none" stroke="#2a2a8c" stroke-width="1" stroke-dasharray="4 4"/><g transform="translate(695.5 358.5) rotate(45)"><path d="M-6.8 0L-2.6-4.2v2.6h5.2v-2.6L6.8 0 2.6 4.2V1.6h-5.2v2.6z" fill="#d0d0d0"/></g><g transform="translate(1099.5 358.5) rotate(-45)"><path d="M-6.8 0L-2.6-4.2v2.6h5.2v-2.6L6.8 0 2.6 4.2V1.6h-5.2v2.6z" fill="#d0d0d0"/></g><g transform="translate(695.5 791.5) rotate(-45)"><path d="M-6.8 0L-2.6-4.2v2.6h5.2v-2.6L6.8 0 2.6 4.2V1.6h-5.2v2.6z" fill="#d0d0d0"/></g><g transform="translate(1099.5 791.5) rotate(45)"><path d="M-6.8 0L-2.6-4.2v2.6h5.2v-2.6L6.8 0 2.6 4.2V1.6h-5.2v2.6z" fill="#d0d0d0"/></g><g transform="translate(897 356.5) rotate(90)"><path d="M-6.8 0L-2.6-4.2v2.6h5.2v-2.6L6.8 0 2.6 4.2V1.6h-5.2v2.6z" fill="#d0d0d0"/></g><g transform="translate(897 792.5) rotate(90)"><path d="M-6.8 0L-2.6-4.2v2.6h5.2v-2.6L6.8 0 2.6 4.2V1.6h-5.2v2.6z" fill="#d0d0d0"/></g><g transform="translate(693.4 574.8) rotate(0)"><path d="M-6.8 0L-2.6-4.2v2.6h5.2v-2.6L6.8 0 2.6 4.2V1.6h-5.2v2.6z" fill="#d0d0d0"/></g><g transform="translate(1101.6 574.8) rotate(0)"><path d="M-6.8 0L-2.6-4.2v2.6h5.2v-2.6L6.8 0 2.6 4.2V1.6h-5.2v2.6z" fill="#d0d0d0"/></g></g></svg>
<div style="position:absolute;left:1px;top:133px;width:31px;height:32px;background:#dcd8d4;border-radius:6px"></div>
<div style="position:absolute;left:0px;top:197px;width:34px;height:1px;background:#dedad6"></div>
<div style="position:absolute;left:0px;top:358px;width:34px;height:1px;background:#dedad6"></div>
<div style="position:absolute;left:0px;top:487px;width:34px;height:1px;background:#dedad6"></div>
<div style="position:absolute;left:0px;top:617px;width:34px;height:1px;background:#dedad6"></div>
<div style="position:absolute;left:0px;top:747px;width:34px;height:1px;background:#dedad6"></div>
<svg style="position:absolute;left:8px;top:140px" width="16" height="16" viewBox="0 0 16 16"><path d="M5 2.5v11l2.8-2.6 2 4 1.6-.8-2-3.9H13z" fill="#111"/></svg>
<svg style="position:absolute;left:8px;top:173px" width="16" height="16" viewBox="0 0 16 16"><path d="M4 5L2.5 13M4 5l8.5-2" stroke="#666" stroke-width=".8"/><rect x="2.5" y="3.5" width="3.5" height="3.5" fill="#2020f0"/><rect x="11.5" y="1.8" width="2.5" height="2.5" fill="#8080ff"/><rect x="1.5" y="12.5" width="2.5" height="2.5" fill="#8080ff"/><path d="M5.5 7.5l8 4.5-3 2.8z" fill="#111"/></svg>
<svg style="position:absolute;left:8px;top:206px" width="16" height="16" viewBox="0 0 16 16"><defs><linearGradient id="gr1" x1="0" y1="0" x2="1" y2="1"><stop offset="0" stop-color="#f0f4f8"/><stop offset="1" stop-color="#a8c0da"/></linearGradient></defs><rect x="1.5" y="1.5" width="13" height="13" rx="1" fill="url(#gr1)" stroke="#333" stroke-width="1"/></svg>
<svg style="position:absolute;left:8px;top:238px" width="16" height="16" viewBox="0 0 16 16"><defs><radialGradient id="gc1" cx=".4" cy=".35" r=".7"><stop offset="0" stop-color="#fff0f0"/><stop offset="1" stop-color="#f5a0aa"/></radialGradient></defs><circle cx="8" cy="8" r="6.5" fill="url(#gc1)" stroke="#222" stroke-width="1"/></svg>
<svg style="position:absolute;left:8px;top:270px" width="16" height="16" viewBox="0 0 16 16"><path d="M4.5 1l3.5 2.5-1 3-3.5.8L1 5z" fill="#f8ec9a" stroke="#333" stroke-width=".8"/><path d="M10 5l1.3 3 3.5.3-2.7 2.3.9 3.4L10 12.2 7 14l.9-3.4L5.2 8.3l3.5-.3z" fill="#f6e060" stroke="#333" stroke-width=".8"/></svg>
<svg style="position:absolute;left:8px;top:302px" width="16" height="16" viewBox="0 0 16 16"><path d="M7.5 1.5l6 2.5v7l-6 3.5-5.5-3V4z" fill="#8888cc"/><path d="M7.5 1.5l6 2.5-4.5 3-7-3z" fill="#c4c4f0"/><path d="M9 7l4.5-3v7L9 14z" fill="#e0e0ff"/><path d="M2 10.5L9 14l4.5-3" fill="#5a5aa8" opacity=".8"/></svg>
<svg style="position:absolute;left:8px;top:335px" width="16" height="16" viewBox="0 0 16 16"><path d="M8 8.5q1-1 .5-1.8T6.8 6 5.5 8.3 8 11 11.5 8.5 9.5 4 4.5 4.5 2.5 9 6 13.5 11.5 13.8 14.5 11" fill="none" stroke="#333" stroke-width="1.1"/></svg>
<svg style="position:absolute;left:8px;top:367px" width="16" height="16" viewBox="0 0 16 16"><path d="M1.5 3.5h7L5 14.5H2" fill="none" stroke="#333" stroke-width="1"/><rect x="1.2" y="12.2" width="2.5" height="2.5" fill="#fff" stroke="#222" stroke-width=".8"/><path d="M11 1.5l3.5 2-4 7-2.5-1.5z" fill="#58a6d8" stroke="#333" stroke-width=".7"/><path d="M8 8.5l2.5 1.5-1 2.5-2.5 1.5-.2-3z" fill="#f0c040" stroke="#333" stroke-width=".6"/><path d="M5 14.5l2-2" stroke="#111" stroke-width="1"/></svg>
<svg style="position:absolute;left:8px;top:399px" width="16" height="16" viewBox="0 0 16 16"><path d="M3 2.5q2-1.5 2.5 1T3 8t1.5 4 4 1.5" fill="none" stroke="#333" stroke-width="1"/><path d="M11 1.5l3.5 2.5-5 7L6 9z" fill="#f6b820" stroke="#333" stroke-width=".7"/><path d="M6 9l3.5 2-3.5 2.5z" fill="#fff" stroke="#333" stroke-width=".6"/></svg>
<svg style="position:absolute;left:8px;top:431px" width="16" height="16" viewBox="0 0 16 16"><path d="M2.5 2q3 0 2.5 5T7.5 14L4 14.5Q1.5 11 3.5 7T2.5 2z" fill="#111"/><path d="M11 1.5l3.5 2.2-4 6.5L8 8.5z" fill="#5aa0d8" stroke="#333" stroke-width=".6"/><path d="M8 8.5l2.5 1.7L9 13.5 6.5 14z" fill="#f0c040" stroke="#333" stroke-width=".6"/></svg>
<svg style="position:absolute;left:8px;top:463px" width="16" height="16" viewBox="0 0 16 16"><path d="M5.5 2h3.5l4 12.5h-3l-.8-2.8H5.5l-.8 2.8H1.5zM6.2 9.2h2.6L7.5 5z" fill="#111"/><path d="M13.5 1.5v13" stroke="#555" stroke-width=".7"/></svg>
<svg style="position:absolute;left:8px;top:496px" width="16" height="16" viewBox="0 0 16 16"><defs><linearGradient id="gg1" x1="0" y1="0" x2="1" y2="1"><stop offset="0" stop-color="#30c040"/><stop offset=".5" stop-color="#e8f8e8"/><stop offset="1" stop-color="#40c050"/></linearGradient></defs><rect x="1" y="1.5" width="14" height="13" fill="url(#gg1)"/><path d="M4 5l7.5 6" stroke="#222" stroke-width="1"/><rect x="2.5" y="3.5" width="3" height="3" fill="#fff" stroke="#222" stroke-width=".8"/><rect x="10.5" y="10" width="3" height="3" fill="#fff" stroke="#222" stroke-width=".8"/></svg>
<svg style="position:absolute;left:8px;top:529px" width="16" height="16" viewBox="0 0 16 16"><path d="M3.5 3.5L13 3l-.5 9.5L3 13z" fill="#50a890"/><path d="M3.5 3.5L13 3 3 13z" fill="#5aa0c8" opacity=".7"/><circle cx="3.5" cy="3.5" r="1.6" fill="#fff" stroke="#111" stroke-width=".8"/><circle cx="13" cy="3" r="1.6" fill="#fff" stroke="#111" stroke-width=".8"/><circle cx="12.5" cy="12.5" r="1.6" fill="#fff" stroke="#111" stroke-width=".8"/><circle cx="3" cy="13" r="1.6" fill="#fff" stroke="#111" stroke-width=".8"/></svg>
<svg style="position:absolute;left:8px;top:561px" width="16" height="16" viewBox="0 0 16 16"><path d="M2 15l1-3 6.5-6.5 2 2L5 14z" fill="#cfe0f0" stroke="#334" stroke-width=".8"/><path d="M9 4.5l3-3a1.5 1.5 0 0 1 2.5 2.5l-3 3z" fill="#111"/><path d="M8 5l3.5 3.5" stroke="#111" stroke-width="1.6"/><circle cx="2.4" cy="14.4" r="1" fill="#3060c0"/></svg>
<svg style="position:absolute;left:8px;top:593px" width="16" height="16" viewBox="0 0 16 16"><ellipse cx="7" cy="13.5" rx="5.5" ry="1.5" fill="#50b060" stroke="#2a6a30" stroke-width=".6"/><path d="M5 2.5l8-1 2 6.5-7 2.5z" fill="#6aaad0" stroke="#333" stroke-width=".8"/><path d="M4.5 4q-1 3 1 6.5" stroke="#40b040" stroke-width="1.6" fill="none"/><path d="M6.5 10.5v3" stroke="#40b040" stroke-width="1.2"/></svg>
<svg style="position:absolute;left:8px;top:626px" width="16" height="16" viewBox="0 0 16 16"><path d="M1 9q4-1 5-5t5-3q2 1 .5 3.5-1.5-2-3-.5T7 9q4 0 8-.5V15H1z" fill="#999"/><path d="M1 10h14v5H1z" fill="#b5b5b5"/></svg>
<svg style="position:absolute;left:8px;top:658px" width="16" height="16" viewBox="0 0 16 16"><path d="M9 7l4-2 2.5 7.5-3.5 2.5-2.5-1z" fill="#50b030" stroke="#2a6a20" stroke-width=".7"/><rect x="10" y="4" width="3" height="2.5" fill="#f0c040"/><circle cx="2" cy="3" r=".6" fill="#222"/><circle cx="3.5" cy="2" r=".6" fill="#222"/><circle cx="5" cy="3.5" r=".6" fill="#222"/><circle cx="3" cy="5.5" r=".6" fill="#222"/><circle cx="6.5" cy="5" r=".6" fill="#222"/><circle cx="2" cy="7.5" r=".6" fill="#222"/><circle cx="5" cy="7" r=".6" fill="#222"/></svg>
<svg style="position:absolute;left:8px;top:690px" width="16" height="16" viewBox="0 0 16 16"><path d="M9.5 1.5l4 3L8 12l-4-3z" fill="#f0a080" stroke="#333" stroke-width=".7"/><path d="M4 9l4 3-1.5 2.2-4-3z" fill="#2040e0" stroke="#223" stroke-width=".7"/><path d="M1 14.5h3M10 14.5h4" stroke="#999" stroke-width="1"/></svg>
<svg style="position:absolute;left:8px;top:722px" width="16" height="16" viewBox="0 0 16 16"><rect x="4" y="1.5" width="5" height="4" fill="#a8c8e8" stroke="#556" stroke-width=".7"/><rect x="1" y="10.5" width="4.5" height="4" fill="#a8c8e8" stroke="#556" stroke-width=".7"/><rect x="10.5" y="10.5" width="4.5" height="4" fill="#a8c8e8" stroke="#556" stroke-width=".7"/><rect x="6" y="6.5" width="5" height="2" fill="#f0c040"/><path d="M3 10.5V8h10v2.5M9 3.5h3.5L13 8" fill="none" stroke="#888" stroke-width="1"/></svg>
<svg style="position:absolute;left:8px;top:756px" width="16" height="16" viewBox="0 0 16 16"><path d="M1.5 4.5l4.5-3 8.5 9.5-4.5 3.5z" fill="#f3c0a8" stroke="#333" stroke-width=".8"/><path d="M4 4.5l1 1M5.5 6.5l1.5 1.2M7 8.5l1 1M8.5 10.3l1.5 1.2" stroke="#555" stroke-width=".6"/></svg>
<svg style="position:absolute;left:8px;top:787px" width="16" height="16" viewBox="0 0 16 16"><circle cx="6.5" cy="6.5" r="5" fill="#d8e8f4" stroke="#333" stroke-width="1.1"/><path d="M10 10l4.5 4.5" stroke="#f0a010" stroke-width="2.6" stroke-linecap="round"/><path d="M10 10l1.5 1.5" stroke="#333" stroke-width="2.6"/></svg>
<svg style="position:absolute;left:8px;top:820px" width="16" height="16" viewBox="0 0 16 16"><path d="M7 1.5h5.5l2.5 2.5v9H7z" fill="#fff" stroke="#333" stroke-width=".8"/><path d="M1.5 4.5h5.5l2.5 2.5v8.5h-8z" fill="#e8e8e8" stroke="#111" stroke-width="1"/></svg>
<svg style="position:absolute;left:1529px;top:550px" width="6" height="14" viewBox="0 0 6 14"><circle cx="3" cy="2" r="1.3" fill="#333"/><circle cx="3" cy="6.5" r="1.3" fill="#333"/><circle cx="3" cy="11" r="1.3" fill="#333"/></svg>
<div style="position:absolute;left:1538px;top:138px;width:385px;height:37px;background:#e3dfdc"></div>
<div style="position:absolute;left:1612px;top:138px;width:133px;height:37px;background:#ebe8e6"></div>
<div style="position:absolute;left:1612px;top:171px;width:133px;height:4px;background:#3584e4"></div>
<svg style="position:absolute;left:1567px;top:147px" width="16" height="16" viewBox="0 0 16 16"><path d="M0.6 0.4h15.8l-1.2 1.6H2.1v13.6H0.6z" fill="#111"/><path d="M2.1 2h13.1L2.1 15.2z" fill="#fff"/><path d="M14.6 2.2L16.4 5.2 9.5 10.5Q7 14.5 1 15.9L.8 15.2Q5 12.8 6.8 9.2z" fill="#111"/><path d="M14.2 4.6l2.3-2.6v4.4z" fill="#f5a010"/></svg>
<svg style="position:absolute;left:1624px;top:147px" width="16" height="16" viewBox="0 0 16 16"><path d="M1.5 1v14" stroke="#e03030" stroke-width="1.2"/><rect x="3" y="1.5" width="5" height="3" fill="#c5d6ea" stroke="#333" stroke-width=".8"/><rect x="3" y="6.5" width="12" height="3" fill="#c5d6ea" stroke="#333" stroke-width=".8"/><rect x="3" y="11.5" width="8" height="3" fill="#c5d6ea" stroke="#333" stroke-width=".8"/></svg>
<div style="position:absolute;left:1642px;top:147px;font-size:12.5px;line-height:16px;color:#2e3436;white-space:nowrap;"><span style="display:inline-block;width:12.08px;text-align:center"><span style="display:inline-block;transform:scaleX(0.97)">整</span></span><span style="display:inline-block;width:12.08px;text-align:center"><span style="display:inline-block;transform:scaleX(0.97)">列</span></span><span style="display:inline-block;width:9.38px;text-align:center"><span style="display:inline-block;transform:scaleX(0.78)">と</span></span><span style="display:inline-block;width:12.08px;text-align:center"><span style="display:inline-block;transform:scaleX(0.97)">配</span></span><span style="display:inline-block;width:12.08px;text-align:center"><span style="display:inline-block;transform:scaleX(0.97)">置</span></span>(A)</div>
<svg style="position:absolute;left:1721px;top:151px" width="9" height="9" viewBox="0 0 9 9"><path d="M1 1l7 7M8 1L1 8" stroke="#6a6a6a" stroke-width="1.4"/></svg>
<div style="position:absolute;left:1892px;top:140px;width:30px;height:31px;background:#e9e7e4;border-radius:5px"></div>
<svg style="position:absolute;left:1899px;top:150px" width="16" height="10" viewBox="0 0 16 10"><path d="M1.5 1.5L8 8l6.5-6.5" fill="none" stroke="#666" stroke-width="1.6"/></svg>
<div style="position:absolute;left:1538px;top:175px;width:385px;height:799px;background:#ffffff"></div>
<div style="position:absolute;left:1539px;top:177px;width:383px;height:597px;background:#fff;border:1px solid #d0cac5;box-sizing:border-box"></div>
<div style="position:absolute;left:1540px;top:178px;width:381px;height:27px;background:#e3dfdc;border-bottom:1px solid #d6d1cc;box-sizing:border-box"></div>
<div style="position:absolute;left:1547px;top:201px;width:59px;height:4px;background:#3584e4"></div>
<svg style="position:absolute;left:1555px;top:184px" width="14" height="14" viewBox="0 0 16 16"><path d="M1.5 1v14" stroke="#e03030" stroke-width="1.2"/><rect x="3" y="1.5" width="5" height="3" fill="#c5d6ea" stroke="#333" stroke-width=".8"/><rect x="3" y="6.5" width="12" height="3" fill="#c5d6ea" stroke="#333" stroke-width=".8"/><rect x="3" y="11.5" width="8" height="3" fill="#c5d6ea" stroke="#333" stroke-width=".8"/></svg>
<div style="position:absolute;left:1575px;top:183px;font-size:12.5px;line-height:16px;color:#2e3436;white-space:nowrap;"><span style="display:inline-block;width:12.08px;text-align:center"><span style="display:inline-block;transform:scaleX(0.97)">整</span></span><span style="display:inline-block;width:12.08px;text-align:center"><span style="display:inline-block;transform:scaleX(0.97)">列</span></span></div>
<svg style="position:absolute;left:1622px;top:184px" width="13" height="13" viewBox="0 0 13 13"><rect x="0.5" y="0.5" width="3.4" height="3.4" fill="#111"/><rect x="0.5" y="4.7" width="3.4" height="3.4" fill="#111"/><rect x="0.5" y="8.9" width="3.4" height="3.4" fill="#111"/><rect x="4.7" y="0.5" width="3.4" height="3.4" fill="#111"/><rect x="4.7" y="4.7" width="3.4" height="3.4" fill="#111"/><rect x="4.7" y="8.9" width="3.4" height="3.4" fill="#111"/><rect x="8.9" y="0.5" width="3.4" height="3.4" fill="#111"/><rect x="8.9" y="4.7" width="3.4" height="3.4" fill="#111"/><rect x="8.9" y="8.9" width="3.4" height="3.4" fill="#111"/></svg>
<div style="position:absolute;left:1641px;top:183px;font-size:12.5px;line-height:16px;color:#2e3436;white-space:nowrap;"><span style="display:inline-block;width:9.38px;text-align:center"><span style="display:inline-block;transform:scaleX(0.78)">グ</span></span><span style="display:inline-block;width:9.38px;text-align:center"><span style="display:inline-block;transform:scaleX(0.78)">リ</span></span><span style="display:inline-block;width:7.50px;text-align:center"><span style="display:inline-block;transform:scaleX(0.62)">ッ</span></span><span style="display:inline-block;width:9.38px;text-align:center"><span style="display:inline-block;transform:scaleX(0.78)">ド</span></span></div>
<svg style="position:absolute;left:1696px;top:184px" width="14" height="14" viewBox="0 0 14 14"><circle cx="12.2" cy="7.0" r="1.7" fill="#111"/><circle cx="10.676948509058429" cy="10.676962015269263" r="1.7" fill="#111"/><circle cx="6.999980899333463" cy="12.19999999996492" r="1.7" fill="#111"/><circle cx="3.3230244785695153" cy="10.676935002797984" r="1.7" fill="#111"/><circle cx="1.8000000001403214" cy="6.999961798666925" r="1.7" fill="#111"/><circle cx="3.323078503512072" cy="3.323010972457903" r="1.7" fill="#111"/><circle cx="7.00005730199961" cy="1.8000000003157233" r="1.7" fill="#111"/><circle cx="10.677002533604096" cy="3.323092009871737" r="1.7" fill="#111"/></svg>
<div style="position:absolute;left:1716px;top:183px;font-size:12.5px;line-height:16px;color:#2e3436;white-space:nowrap;"><span style="display:inline-block;width:12.08px;text-align:center"><span style="display:inline-block;transform:scaleX(0.97)">円</span></span></div>
<div style="position:absolute;left:1545px;top:207px;font-size:12px;line-height:16px;color:#2e3436;white-space:nowrap;font-weight:bold"><span style="display:inline-block;width:11.60px;text-align:center"><span style="display:inline-block;transform:scaleX(0.97)">整</span></span><span style="display:inline-block;width:11.60px;text-align:center"><span style="display:inline-block;transform:scaleX(0.97)">列</span></span></div>
<div style="position:absolute;left:1545px;top:407px;font-size:12px;line-height:16px;color:#2e3436;white-space:nowrap;font-weight:bold"><span style="display:inline-block;width:11.60px;text-align:center"><span style="display:inline-block;transform:scaleX(0.97)">配</span></span><span style="display:inline-block;width:11.60px;text-align:center"><span style="display:inline-block;transform:scaleX(0.97)">置</span></span></div>
<div style="position:absolute;left:1545px;top:505px;font-size:12px;line-height:16px;color:#2e3436;white-space:nowrap;font-weight:bold"><span style="display:inline-block;width:11.60px;text-align:center"><span style="display:inline-block;transform:scaleX(0.97)">再</span></span><span style="display:inline-block;width:11.60px;text-align:center"><span style="display:inline-block;transform:scaleX(0.97)">配</span></span><span style="display:inline-block;width:11.60px;text-align:center"><span style="display:inline-block;transform:scaleX(0.97)">置</span></span></div>
<div style="position:absolute;left:1545px;top:568px;font-size:12px;line-height:16px;color:#2e3436;white-space:nowrap;font-weight:bold"><span style="display:inline-block;width:11.60px;text-align:center"><span style="display:inline-block;transform:scaleX(0.97)">重</span></span><span style="display:inline-block;width:9.00px;text-align:center"><span style="display:inline-block;transform:scaleX(0.78)">な</span></span><span style="display:inline-block;width:9.00px;text-align:center"><span style="display:inline-block;transform:scaleX(0.78)">り</span></span><span style="display:inline-block;width:9.00px;text-align:center"><span style="display:inline-block;transform:scaleX(0.78)">を</span></span><span style="display:inline-block;width:11.60px;text-align:center"><span style="display:inline-block;transform:scaleX(0.97)">除</span></span><span style="display:inline-block;width:11.60px;text-align:center"><span style="display:inline-block;transform:scaleX(0.97)">去</span></span></div>
<div style="position:absolute;left:1545px;top:623px;font-size:12px;line-height:16px;color:#2e3436;white-space:nowrap;font-weight:bold"><span style="display:inline-block;width:9.00px;text-align:center"><span style="display:inline-block;transform:scaleX(0.78)">ノ</span></span><span style="display:inline-block;width:9.50px;text-align:center"><span style="display:inline-block;transform:scaleX(0.8)">ー</span></span><span style="display:inline-block;width:9.00px;text-align:center"><span style="display:inline-block;transform:scaleX(0.78)">ド</span></span><span style="display:inline-block;width:9.00px;text-align:center"><span style="display:inline-block;transform:scaleX(0.78)">を</span></span><span style="display:inline-block;width:11.60px;text-align:center"><span style="display:inline-block;transform:scaleX(0.97)">整</span></span><span style="display:inline-block;width:11.60px;text-align:center"><span style="display:inline-block;transform:scaleX(0.97)">列</span></span></div>
<div style="position:absolute;left:1545px;top:721px;font-size:12px;line-height:16px;color:#2e3436;white-space:nowrap;font-weight:bold"><span style="display:inline-block;width:9.00px;text-align:center"><span style="display:inline-block;transform:scaleX(0.78)">ノ</span></span><span style="display:inline-block;width:9.50px;text-align:center"><span style="display:inline-block;transform:scaleX(0.8)">ー</span></span><span style="display:inline-block;width:9.00px;text-align:center"><span style="display:inline-block;transform:scaleX(0.78)">ド</span></span><span style="display:inline-block;width:9.00px;text-align:center"><span style="display:inline-block;transform:scaleX(0.78)">を</span></span><span style="display:inline-block;width:11.60px;text-align:center"><span style="display:inline-block;transform:scaleX(0.97)">配</span></span><span style="display:inline-block;width:11.60px;text-align:center"><span style="display:inline-block;transform:scaleX(0.97)">置</span></span></div>
<svg style="position:absolute;left:1565px;top:234px" width="16" height="16" viewBox="0 0 16 16"><rect x="2" y="2" width="12" height="12" fill="none" stroke="#111" stroke-width="1" stroke-dasharray="1.5 1"/><rect x="4.5" y="4.5" width="7" height="7" fill="#e8eef5" stroke="#333" stroke-width=".9"/></svg>
<div style="position:absolute;left:1595px;top:234px;font-size:12px;line-height:16px;color:#2e3436;white-space:nowrap;">3 <span style="display:inline-block;width:11.60px;text-align:center"><span style="display:inline-block;transform:scaleX(0.97)">回</span></span><span style="display:inline-block;width:11.60px;text-align:center"><span style="display:inline-block;transform:scaleX(0.97)">目</span></span><span style="display:inline-block;width:9.00px;text-align:center"><span style="display:inline-block;transform:scaleX(0.78)">の</span></span><span style="display:inline-block;width:9.00px;text-align:center"><span style="display:inline-block;transform:scaleX(0.78)">ク</span></span><span style="display:inline-block;width:9.00px;text-align:center"><span style="display:inline-block;transform:scaleX(0.78)">リ</span></span><span style="display:inline-block;width:7.20px;text-align:center"><span style="display:inline-block;transform:scaleX(0.62)">ッ</span></span><span style="display:inline-block;width:9.00px;text-align:center"><span style="display:inline-block;transform:scaleX(0.78)">ク</span></span><span style="display:inline-block;width:9.00px;text-align:center"><span style="display:inline-block;transform:scaleX(0.78)">で</span></span><span style="display:inline-block;width:9.00px;text-align:center"><span style="display:inline-block;transform:scaleX(0.78)">ハ</span></span><span style="display:inline-block;width:9.00px;text-align:center"><span style="display:inline-block;transform:scaleX(0.78)">ン</span></span><span style="display:inline-block;width:9.00px;text-align:center"><span style="display:inline-block;transform:scaleX(0.78)">ド</span></span><span style="display:inline-block;width:9.00px;text-align:center"><span style="display:inline-block;transform:scaleX(0.78)">ル</span></span><span style="display:inline-block;width:9.00px;text-align:center"><span style="display:inline-block;transform:scaleX(0.78)">を</span></span><span style="display:inline-block;width:11.60px;text-align:center"><span style="display:inline-block;transform:scaleX(0.97)">整</span></span><span style="display:inline-block;width:11.60px;text-align:center"><span style="display:inline-block;transform:scaleX(0.97)">列</span></span><span style="display:inline-block;width:9.00px;text-align:center"><span style="display:inline-block;transform:scaleX(0.78)">し</span></span><span style="display:inline-block;width:9.00px;text-align:center"><span style="display:inline-block;transform:scaleX(0.78)">ま</span></span><span style="display:inline-block;width:9.00px;text-align:center"><span style="display:inline-block;transform:scaleX(0.78)">す</span></span></div>
<div style="position:absolute;left:1557px;top:260px;width:34px;height:34px;background:#dad5d1;border-radius:5px"></div>
<svg style="position:absolute;left:1566px;top:269px" width="16" height="16" viewBox="0 0 16 16"><path d="M2.5 2v12M13.5 2v12" stroke="#e03030" stroke-width="1.1"/><rect x="4" y="4" width="8" height="3.5" fill="#c5d6ea" stroke="#333" stroke-width=".8"/><rect x="4" y="8.5" width="8" height="3.5" fill="#c5d6ea" stroke="#333" stroke-width=".8"/></svg>
<div style="position:absolute;left:1595px;top:268px;font-size:12px;line-height:16px;color:#2e3436;white-space:nowrap;"><span style="display:inline-block;width:11.60px;text-align:center"><span style="display:inline-block;transform:scaleX(0.97)">選</span></span><span style="display:inline-block;width:11.60px;text-align:center"><span style="display:inline-block;transform:scaleX(0.97)">択</span></span><span style="display:inline-block;width:9.00px;text-align:center"><span style="display:inline-block;transform:scaleX(0.78)">オ</span></span><span style="display:inline-block;width:9.00px;text-align:center"><span style="display:inline-block;transform:scaleX(0.78)">ブ</span></span><span style="display:inline-block;width:9.00px;text-align:center"><span style="display:inline-block;transform:scaleX(0.78)">ジ</span></span><span style="display:inline-block;width:7.20px;text-align:center"><span style="display:inline-block;transform:scaleX(0.62)">ェ</span></span><span style="display:inline-block;width:9.00px;text-align:center"><span style="display:inline-block;transform:scaleX(0.78)">ク</span></span><span style="display:inline-block;width:9.00px;text-align:center"><span style="display:inline-block;transform:scaleX(0.78)">ト</span></span><span style="display:inline-block;width:9.00px;text-align:center"><span style="display:inline-block;transform:scaleX(0.78)">を</span></span><span style="display:inline-block;width:9.00px;text-align:center"><span style="display:inline-block;transform:scaleX(0.78)">グ</span></span><span style="display:inline-block;width:9.00px;text-align:center"><span style="display:inline-block;transform:scaleX(0.78)">ル</span></span><span style="display:inline-block;width:9.50px;text-align:center"><span style="display:inline-block;transform:scaleX(0.8)">ー</span></span><span style="display:inline-block;width:9.00px;text-align:center"><span style="display:inline-block;transform:scaleX(0.78)">プ</span></span><span style="display:inline-block;width:9.00px;text-align:center"><span style="display:inline-block;transform:scaleX(0.78)">と</span></span><span style="display:inline-block;width:9.00px;text-align:center"><span style="display:inline-block;transform:scaleX(0.78)">し</span></span><span style="display:inline-block;width:9.00px;text-align:center"><span style="display:inline-block;transform:scaleX(0.78)">て</span></span><span style="display:inline-block;width:11.60px;text-align:center"><span style="display:inline-block;transform:scaleX(0.97)">移</span></span><span style="display:inline-block;width:11.60px;text-align:center"><span style="display:inline-block;transform:scaleX(0.97)">動</span></span>/<span style="display:inline-block;width:11.60px;text-align:center"><span style="display:inline-block;transform:scaleX(0.97)">整</span></span><span style="display:inline-block;width:11.60px;text-align:center"><span style="display:inline-block;transform:scaleX(0.97)">列</span></span><span style="display:inline-block;width:9.00px;text-align:center"><span style="display:inline-block;transform:scaleX(0.78)">し</span></span><span style="display:inline-block;width:9.00px;text-align:center"><span style="display:inline-block;transform:scaleX(0.78)">ま</span></span><span style="display:inline-block;width:9.00px;text-align:center"><span style="display:inline-block;transform:scaleX(0.78)">す</span></span></div>
<div style="position:absolute;left:1556px;top:302px;font-size:12px;line-height:16px;color:#2e3436;white-space:nowrap;"><span style="display:inline-block;width:11.60px;text-align:center"><span style="display:inline-block;transform:scaleX(0.97)">基</span></span><span style="display:inline-block;width:11.60px;text-align:center"><span style="display:inline-block;transform:scaleX(0.97)">準</span></span>:</div>
<div style="position:absolute;left:1591px;top:295px;width:112px;height:33px;background:linear-gradient(#f8f7f6,#edebe9);border:1px solid #cdc7c2;border-radius:5px;box-sizing:border-box"></div>
<div style="position:absolute;left:1598px;top:302px;font-size:12px;line-height:16px;color:#2e3436;white-space:nowrap;"><span style="display:inline-block;width:11.60px;text-align:center"><span style="display:inline-block;transform:scaleX(0.97)">最</span></span><span style="display:inline-block;width:11.60px;text-align:center"><span style="display:inline-block;transform:scaleX(0.97)">大</span></span><span style="display:inline-block;width:9.00px;text-align:center"><span style="display:inline-block;transform:scaleX(0.78)">オ</span></span><span style="display:inline-block;width:9.00px;text-align:center"><span style="display:inline-block;transform:scaleX(0.78)">ブ</span></span><span style="display:inline-block;width:9.00px;text-align:center"><span style="display:inline-block;transform:scaleX(0.78)">ジ</span></span><span style="display:inline-block;width:7.20px;text-align:center"><span style="display:inline-block;transform:scaleX(0.62)">ェ</span></span><span style="display:inline-block;width:9.00px;text-align:center"><span style="display:inline-block;transform:scaleX(0.78)">ク</span></span><span style="display:inline-block;width:9.00px;text-align:center"><span style="display:inline-block;transform:scaleX(0.78)">ト</span></span></div>
<svg style="position:absolute;left:1684px;top:307px" width="12" height="8" viewBox="0 0 12 8"><path d="M0.5 1h11L6 7z" fill="#2e3436"/></svg>
<svg style="position:absolute;left:1565px;top:337px" width="16" height="16" viewBox="0 0 16 16"><rect x="0.8" y="3" width="10.8" height="5" rx=".6" fill="#c8daee" stroke="#5a6470" stroke-width="0.8"/><rect x="3.5" y="10.8" width="7.8" height="4.6" rx=".6" fill="#c8daee" stroke="#5a6470" stroke-width="0.8"/><rect x="5" y="6.5" width="6" height="3.2" rx=".6" fill="#c8daee" stroke="#5a6470" stroke-width="0.8"/><path d="M11.8 0v16" stroke="#e03a3a" stroke-width="1" fill="none"/><rect x="12.2" y="0.6" width="3.4" height="3" fill="#f2cc30" stroke="#a08010" stroke-width=".5"/></svg>
<svg style="position:absolute;left:1599px;top:337px" width="16" height="16" viewBox="0 0 16 16"><rect x="2" y="0.8" width="13.5" height="4.6" rx=".6" fill="#c8daee" stroke="#5a6470" stroke-width="0.8"/><rect x="2" y="6.3" width="5.5" height="3.6" rx=".6" fill="#c8daee" stroke="#5a6470" stroke-width="0.8"/><rect x="2" y="10" width="7" height="4" rx=".6" fill="#c8daee" stroke="#5a6470" stroke-width="0.8"/><path d="M1.5 0v16" stroke="#e03a3a" stroke-width="1" fill="none"/><path d="M9.5 14.8H2.5" stroke="#222" stroke-width="0.8" fill="none"/><path d="M2.5 14.8l2.2 -1.4v2.8z" fill="#222"/></svg>
<svg style="position:absolute;left:1633px;top:337px" width="16" height="16" viewBox="0 0 16 16"><rect x="0.8" y="0.8" width="14.4" height="4.6" rx=".6" fill="#c8daee" stroke="#5a6470" stroke-width="0.8"/><rect x="5" y="5.8" width="6" height="3.5" rx=".6" fill="#c8daee" stroke="#5a6470" stroke-width="0.8"/><rect x="3.8" y="9.5" width="8.4" height="4.2" rx=".6" fill="#c8daee" stroke="#5a6470" stroke-width="0.8"/><path d="M8 0v16" stroke="#e03a3a" stroke-width="1" fill="none"/><path d="M1 14.8H7" stroke="#222" stroke-width="0.8" fill="none"/><path d="M7 14.8l-2.2 -1.4v2.8z" fill="#222"/><path d="M15 14.8H9" stroke="#222" stroke-width="0.8" fill="none"/><path d="M9 14.8l2.2 -1.4v2.8z" fill="#222"/></svg>
<svg style="position:absolute;left:1668px;top:337px" width="16" height="16" viewBox="0 0 16 16"><rect x="0.5" y="0.8" width="14" height="4.6" rx=".6" fill="#c8daee" stroke="#5a6470" stroke-width="0.8"/><rect x="8" y="6" width="6" height="3.5" rx=".6" fill="#c8daee" stroke="#5a6470" stroke-width="0.8"/><rect x="7" y="10" width="7.5" height="4" rx=".6" fill="#c8daee" stroke="#5a6470" stroke-width="0.8"/><path d="M14.5 0v16" stroke="#e03a3a" stroke-width="1" fill="none"/><path d="M6 14.8H13.5" stroke="#222" stroke-width="0.8" fill="none"/><path d="M13.5 14.8l-2.2 -1.4v2.8z" fill="#222"/></svg>
<svg style="position:absolute;left:1702px;top:337px" width="16" height="16" viewBox="0 0 16 16"><rect x="4.5" y="3" width="11" height="5" rx=".6" fill="#c8daee" stroke="#5a6470" stroke-width="0.8"/><rect x="4.5" y="10.8" width="8" height="4.6" rx=".6" fill="#c8daee" stroke="#5a6470" stroke-width="0.8"/><rect x="4.5" y="6.8" width="6" height="3" rx=".6" fill="#c8daee" stroke="#5a6470" stroke-width="0.8"/><path d="M4 0v16" stroke="#e03a3a" stroke-width="1" fill="none"/><rect x="0.4" y="0.6" width="3.4" height="3" fill="#f2cc30" stroke="#a08010" stroke-width=".5"/></svg>
<svg style="position:absolute;left:1735px;top:337px" width="16" height="16" viewBox="0 0 16 16"><text x="4" y="14.5" font-family="Liberation Serif" font-style="italic" font-weight="bold" font-size="14" fill="#111">y</text><rect x="7.5" y="0.5" width="6" height="5.5" fill="#3a5a8a"/><path d="M5 0v16" stroke="#e03a3a" stroke-width="1" fill="none"/></svg>
<svg style="position:absolute;left:1565px;top:371px" width="16" height="16" viewBox="0 0 16 16"><g transform="matrix(0 1 1 0 0 0)"><rect x="0.8" y="3" width="10.8" height="5" rx=".6" fill="#c8daee" stroke="#5a6470" stroke-width="0.8"/><rect x="3.5" y="10.8" width="7.8" height="4.6" rx=".6" fill="#c8daee" stroke="#5a6470" stroke-width="0.8"/><rect x="5" y="6.5" width="6" height="3.2" rx=".6" fill="#c8daee" stroke="#5a6470" stroke-width="0.8"/><path d="M11.8 0v16" stroke="#e03a3a" stroke-width="1" fill="none"/><rect x="12.2" y="0.6" width="3.4" height="3" fill="#f2cc30" stroke="#a08010" stroke-width=".5"/></g></svg>
<svg style="position:absolute;left:1599px;top:371px" width="16" height="16" viewBox="0 0 16 16"><g transform="matrix(0 1 1 0 0 0)"><rect x="2" y="0.8" width="13.5" height="4.6" rx=".6" fill="#c8daee" stroke="#5a6470" stroke-width="0.8"/><rect x="2" y="6.3" width="5.5" height="3.6" rx=".6" fill="#c8daee" stroke="#5a6470" stroke-width="0.8"/><rect x="2" y="10" width="7" height="4" rx=".6" fill="#c8daee" stroke="#5a6470" stroke-width="0.8"/><path d="M1.5 0v16" stroke="#e03a3a" stroke-width="1" fill="none"/><path d="M9.5 14.8H2.5" stroke="#222" stroke-width="0.8" fill="none"/><path d="M2.5 14.8l2.2 -1.4v2.8z" fill="#222"/></g></svg>
<svg style="position:absolute;left:1633px;top:371px" width="16" height="16" viewBox="0 0 16 16"><g transform="matrix(0 1 1 0 0 0)"><rect x="0.8" y="0.8" width="14.4" height="4.6" rx=".6" fill="#c8daee" stroke="#5a6470" stroke-width="0.8"/><rect x="5" y="5.8" width="6" height="3.5" rx=".6" fill="#c8daee" stroke="#5a6470" stroke-width="0.8"/><rect x="3.8" y="9.5" width="8.4" height="4.2" rx=".6" fill="#c8daee" stroke="#5a6470" stroke-width="0.8"/><path d="M8 0v16" stroke="#e03a3a" stroke-width="1" fill="none"/><path d="M1 14.8H7" stroke="#222" stroke-width="0.8" fill="none"/><path d="M7 14.8l-2.2 -1.4v2.8z" fill="#222"/><path d="M15 14.8H9" stroke="#222" stroke-width="0.8" fill="none"/><path d="M9 14.8l2.2 -1.4v2.8z" fill="#222"/></g></svg>
<svg style="position:absolute;left:1668px;top:371px" width="16" height="16" viewBox="0 0 16 16"><g transform="matrix(0 1 1 0 0 0)"><rect x="0.5" y="0.8" width="14" height="4.6" rx=".6" fill="#c8daee" stroke="#5a6470" stroke-width="0.8"/><rect x="8" y="6" width="6" height="3.5" rx=".6" fill="#c8daee" stroke="#5a6470" stroke-width="0.8"/><rect x="7" y="10" width="7.5" height="4" rx=".6" fill="#c8daee" stroke="#5a6470" stroke-width="0.8"/><path d="M14.5 0v16" stroke="#e03a3a" stroke-width="1" fill="none"/><path d="M6 14.8H13.5" stroke="#222" stroke-width="0.8" fill="none"/><path d="M13.5 14.8l-2.2 -1.4v2.8z" fill="#222"/></g></svg>
<svg style="position:absolute;left:1702px;top:371px" width="16" height="16" viewBox="0 0 16 16"><g transform="matrix(0 1 1 0 0 0)"><rect x="4.5" y="3" width="11" height="5" rx=".6" fill="#c8daee" stroke="#5a6470" stroke-width="0.8"/><rect x="4.5" y="10.8" width="8" height="4.6" rx=".6" fill="#c8daee" stroke="#5a6470" stroke-width="0.8"/><rect x="4.5" y="6.8" width="6" height="3" rx=".6" fill="#c8daee" stroke="#5a6470" stroke-width="0.8"/><path d="M4 0v16" stroke="#e03a3a" stroke-width="1" fill="none"/><rect x="0.4" y="0.6" width="3.4" height="3" fill="#f2cc30" stroke="#a08010" stroke-width=".5"/></g></svg>
<svg style="position:absolute;left:1735px;top:371px" width="16" height="16" viewBox="0 0 16 16"><text x="1" y="13" font-family="Liberation Serif" font-style="italic" font-weight="bold" font-size="14" fill="#111">y</text><rect x="9.5" y="6.5" width="6" height="5.5" fill="#3a5a8a"/><path d="M0 12.5h16" stroke="#e03a3a" stroke-width="1" fill="none"/></svg>
<svg style="position:absolute;left:1565px;top:434px" width="16" height="16" viewBox="0 0 16 16"><rect x="1" y="4" width="4.5" height="7.5" rx=".6" fill="#c8daee" stroke="#5a6470" stroke-width="0.8"/><rect x="6.5" y="4.5" width="4.5" height="11" rx=".6" fill="#c8daee" stroke="#5a6470" stroke-width="0.8"/><rect x="12" y="6.5" width="3.5" height="8.2" rx=".6" fill="#c8daee" stroke="#5a6470" stroke-width="0.8"/><path d="M1 .8H14.5" stroke="#333" stroke-width="0.9" fill="none" stroke-dasharray="1 .8"/><path d="M1 0v8" stroke="#e03a3a" stroke-width="1.1" fill="none"/><path d="M7 0v8" stroke="#e03a3a" stroke-width="1.1" fill="none"/><path d="M13.5 0v8" stroke="#e03a3a" stroke-width="1.1" fill="none"/></svg>
<svg style="position:absolute;left:1599px;top:434px" width="16" height="16" viewBox="0 0 16 16"><rect x="0.5" y="5.5" width="4.5" height="7" rx=".6" fill="#c8daee" stroke="#5a6470" stroke-width="0.8"/><rect x="6.5" y="4.5" width="4.5" height="11" rx=".6" fill="#c8daee" stroke="#5a6470" stroke-width="0.8"/><rect x="12.5" y="6" width="3.5" height="8.5" rx=".6" fill="#c8daee" stroke="#5a6470" stroke-width="0.8"/><path d="M1 .8H14.5" stroke="#333" stroke-width="0.9" fill="none" stroke-dasharray="1 .8"/><path d="M2.5 0v8" stroke="#e03a3a" stroke-width="1.1" fill="none"/><path d="M8.5 0v8" stroke="#e03a3a" stroke-width="1.1" fill="none"/><path d="M14.5 0v8" stroke="#e03a3a" stroke-width="1.1" fill="none"/></svg>
<svg style="position:absolute;left:1633px;top:434px" width="16" height="16" viewBox="0 0 16 16"><rect x="0.5" y="6.5" width="4" height="8" rx=".6" fill="#c8daee" stroke="#5a6470" stroke-width="0.8"/><rect x="5.5" y="4.5" width="4.5" height="11" rx=".6" fill="#c8daee" stroke="#5a6470" stroke-width="0.8"/><rect x="11" y="4.5" width="4" height="7.5" rx=".6" fill="#c8daee" stroke="#5a6470" stroke-width="0.8"/><path d="M1 .8H14.5" stroke="#333" stroke-width="0.9" fill="none" stroke-dasharray="1 .8"/><path d="M3.5 0v8" stroke="#e03a3a" stroke-width="1.1" fill="none"/><path d="M9.5 0v8" stroke="#e03a3a" stroke-width="1.1" fill="none"/><path d="M15 0v8" stroke="#e03a3a" stroke-width="1.1" fill="none"/></svg>
<svg style="position:absolute;left:1668px;top:434px" width="16" height="16" viewBox="0 0 16 16"><rect x="6" y="0.5" width="4" height="8" fill="#f0b0b0"/><rect x="0.5" y="4.5" width="2.8" height="11" rx=".6" fill="#c8daee" stroke="#5a6470" stroke-width="0.8"/><rect x="6.5" y="5.5" width="3" height="6" rx=".6" fill="#c8daee" stroke="#5a6470" stroke-width="0.8"/><rect x="12.5" y="3.5" width="3" height="12" rx=".6" fill="#c8daee" stroke="#5a6470" stroke-width="0.8"/><path d="M1 .8H14.5" stroke="#333" stroke-width="0.9" fill="none" stroke-dasharray="1 .8"/><path d="M2.5 0v8" stroke="#e03a3a" stroke-width="1.1" fill="none"/><path d="M8 0v8" stroke="#e03a3a" stroke-width="1.1" fill="none"/><path d="M13.5 0v8" stroke="#e03a3a" stroke-width="1.1" fill="none"/></svg>
<svg style="position:absolute;left:1702px;top:434px" width="16" height="16" viewBox="0 0 16 16"><path d="M1 0v16" stroke="#e03a3a" stroke-width="1" fill="none"/><path d="M9.5 0v16" stroke="#e03a3a" stroke-width="1" fill="none"/><path d="M2 1.5H9" stroke="#222" stroke-width="0.8" fill="none"/><path d="M9 1.5l-2.2 -1.4v2.8z" fill="#222"/><rect x="1.5" y="7" width="6" height="5.5" fill="#4a6a9a"/><text x="9" y="13" font-family="Liberation Serif" font-style="italic" font-weight="bold" font-size="13" fill="#111">y</text></svg>
<svg style="position:absolute;left:1565px;top:469px" width="16" height="16" viewBox="0 0 16 16"><g transform="matrix(0 1 1 0 0 0)"><rect x="1" y="4" width="4.5" height="7.5" rx=".6" fill="#c8daee" stroke="#5a6470" stroke-width="0.8"/><rect x="6.5" y="4.5" width="4.5" height="11" rx=".6" fill="#c8daee" stroke="#5a6470" stroke-width="0.8"/><rect x="12" y="6.5" width="3.5" height="8.2" rx=".6" fill="#c8daee" stroke="#5a6470" stroke-width="0.8"/><path d="M1 .8H14.5" stroke="#333" stroke-width="0.9" fill="none" stroke-dasharray="1 .8"/><path d="M1 0v8" stroke="#e03a3a" stroke-width="1.1" fill="none"/><path d="M7 0v8" stroke="#e03a3a" stroke-width="1.1" fill="none"/><path d="M13.5 0v8" stroke="#e03a3a" stroke-width="1.1" fill="none"/></g></svg>
<svg style="position:absolute;left:1599px;top:469px" width="16" height="16" viewBox="0 0 16 16"><g transform="matrix(0 1 1 0 0 0)"><rect x="0.5" y="5.5" width="4.5" height="7" rx=".6" fill="#c8daee" stroke="#5a6470" stroke-width="0.8"/><rect x="6.5" y="4.5" width="4.5" height="11" rx=".6" fill="#c8daee" stroke="#5a6470" stroke-width="0.8"/><rect x="12.5" y="6" width="3.5" height="8.5" rx=".6" fill="#c8daee" stroke="#5a6470" stroke-width="0.8"/><path d="M1 .8H14.5" stroke="#333" stroke-width="0.9" fill="none" stroke-dasharray="1 .8"/><path d="M2.5 0v8" stroke="#e03a3a" stroke-width="1.1" fill="none"/><path d="M8.5 0v8" stroke="#e03a3a" stroke-width="1.1" fill="none"/><path d="M14.5 0v8" stroke="#e03a3a" stroke-width="1.1" fill="none"/></g></svg>
<svg style="position:absolute;left:1633px;top:469px" width="16" height="16" viewBox="0 0 16 16"><g transform="matrix(0 1 1 0 0 0)"><rect x="0.5" y="6.5" width="4" height="8" rx=".6" fill="#c8daee" stroke="#5a6470" stroke-width="0.8"/><rect x="5.5" y="4.5" width="4.5" height="11" rx=".6" fill="#c8daee" stroke="#5a6470" stroke-width="0.8"/><rect x="11" y="4.5" width="4" height="7.5" rx=".6" fill="#c8daee" stroke="#5a6470" stroke-width="0.8"/><path d="M1 .8H14.5" stroke="#333" stroke-width="0.9" fill="none" stroke-dasharray="1 .8"/><path d="M3.5 0v8" stroke="#e03a3a" stroke-width="1.1" fill="none"/><path d="M9.5 0v8" stroke="#e03a3a" stroke-width="1.1" fill="none"/><path d="M15 0v8" stroke="#e03a3a" stroke-width="1.1" fill="none"/></g></svg>
<svg style="position:absolute;left:1668px;top:469px" width="16" height="16" viewBox="0 0 16 16"><g transform="matrix(0 1 1 0 0 0)"><rect x="6" y="0.5" width="4" height="8" fill="#f0b0b0"/><rect x="0.5" y="4.5" width="2.8" height="11" rx=".6" fill="#c8daee" stroke="#5a6470" stroke-width="0.8"/><rect x="6.5" y="5.5" width="3" height="6" rx=".6" fill="#c8daee" stroke="#5a6470" stroke-width="0.8"/><rect x="12.5" y="3.5" width="3" height="12" rx=".6" fill="#c8daee" stroke="#5a6470" stroke-width="0.8"/><path d="M1 .8H14.5" stroke="#333" stroke-width="0.9" fill="none" stroke-dasharray="1 .8"/><path d="M2.5 0v8" stroke="#e03a3a" stroke-width="1.1" fill="none"/><path d="M8 0v8" stroke="#e03a3a" stroke-width="1.1" fill="none"/><path d="M13.5 0v8" stroke="#e03a3a" stroke-width="1.1" fill="none"/></g></svg>
<svg style="position:absolute;left:1702px;top:469px" width="16" height="16" viewBox="0 0 16 16"><path d="M0 7h16" stroke="#e03a3a" stroke-width="1" fill="none"/><path d="M0 15h16" stroke="#e03a3a" stroke-width="1" fill="none"/><path d="M1.5 7.5v7" stroke="#111" stroke-width=".9"/><rect x="9" y="9" width="6" height="5.5" fill="#4a6a9a"/><text x="7" y="8" font-family="Liberation Serif" font-style="italic" font-weight="bold" font-size="12" fill="#111">y</text></svg>
<svg style="position:absolute;left:1565px;top:532px" width="16" height="16" viewBox="0 0 16 16"><path d="M3 2L1 5.5 2 10 4.5 11.5 6 7 3 2M6 7L10.5 7M10.5 7L14.5 3M10.5 7L13.5 12" stroke="#8a8a9a" stroke-width="0.9" fill="none"/><circle cx="3" cy="2" r="1.5" fill="#3a50f0"/><circle cx="1" cy="5.5" r="1.5" fill="#3a50f0"/><circle cx="2" cy="10" r="1.5" fill="#3a50f0"/><circle cx="4.5" cy="11.5" r="1.5" fill="#3a50f0"/><circle cx="6" cy="7" r="1.5" fill="#3a50f0"/><circle cx="10.5" cy="7" r="1.5" fill="#3a50f0"/><circle cx="14.5" cy="3" r="1.5" fill="#3a50f0"/><circle cx="13.5" cy="12" r="1.5" fill="#3a50f0"/></svg>
<svg style="position:absolute;left:1599px;top:532px" width="16" height="16" viewBox="0 0 16 16"><rect x="0.5" y="0.5" width="5.5" height="5.5" rx=".6" fill="#c8daee" stroke="#5a6470" stroke-width="0.8"/><rect x="9.5" y="9.5" width="6" height="6" rx=".6" fill="#c8daee" stroke="#5a6470" stroke-width="0.8"/><path d="M6 3.3h3a2 2 0 0 1 2 2V9" stroke="#333" stroke-width="0.9" fill="none"/><path d="M3.3 6v3a2 2 0 0 0 2 2H9.5" stroke="#333" stroke-width="0.9" fill="none"/></svg>
<svg style="position:absolute;left:1633px;top:532px" width="16" height="16" viewBox="0 0 16 16"><rect x="0.5" y="0.5" width="5.5" height="5.5" rx=".6" fill="#c8daee" stroke="#5a6470" stroke-width="0.8"/><rect x="9.5" y="6.5" width="6" height="6" rx=".6" fill="#c8daee" stroke="#5a6470" stroke-width="0.8"/><path d="M6 3h6v3.5" stroke="#333" stroke-width="0.9" fill="none"/><rect x="2" y="9" width="5" height="5" fill="#a02020"/><path d="M3.3 6v3" stroke="#333" stroke-width="0.9" fill="none"/></svg>
<svg style="position:absolute;left:1668px;top:532px" width="16" height="16" viewBox="0 0 16 16"><rect x="0.5" y="0.5" width="5.5" height="5.5" rx=".6" fill="#c8daee" stroke="#5a6470" stroke-width="0.8"/><rect x="9.5" y="6.5" width="6" height="6" rx=".6" fill="#c8daee" stroke="#5a6470" stroke-width="0.8"/><path d="M6 3h6v3.5" stroke="#333" stroke-width="0.9" fill="none"/><circle cx="4" cy="11.5" r="3" fill="none" stroke="#e03030" stroke-width="1"/></svg>
<svg style="position:absolute;left:1702px;top:532px" width="16" height="16" viewBox="0 0 16 16"><rect x="1" y="1.5" width="3.4" height="3.2" rx=".6" fill="#f2cc30" stroke="#665" stroke-width="0.6"/><rect x="9.5" y="0.5" width="3.4" height="3.2" rx=".6" fill="#f2cc30" stroke="#665" stroke-width="0.6"/><rect x="6.5" y="6.5" width="3.4" height="3.2" rx=".6" fill="#f2cc30" stroke="#665" stroke-width="0.6"/><rect x="10.5" y="4.5" width="3.4" height="3.2" rx=".6" fill="#f2cc30" stroke="#665" stroke-width="0.6"/><rect x="1" y="11.5" width="3.4" height="3.2" rx=".6" fill="#f2cc30" stroke="#665" stroke-width="0.6"/><rect x="7" y="10.5" width="3.4" height="3.2" rx=".6" fill="#f2cc30" stroke="#665" stroke-width="0.6"/></svg>
<svg style="position:absolute;left:1735px;top:532px" width="16" height="16" viewBox="0 0 16 16"><path d="M5 5.5L12 2M5 6.5L12 13M12 3v9" stroke="#e03030" stroke-width="0.9" fill="none"/><rect x="0.5" y="4" width="5" height="4.5" rx=".6" fill="#f2cc30" stroke="#665" stroke-width="0.7"/><rect x="11.5" y="0.5" width="4" height="4.5" rx=".6" fill="#f2cc30" stroke="#665" stroke-width="0.7"/><rect x="11.5" y="11" width="4" height="4" rx=".6" fill="#f2cc30" stroke="#665" stroke-width="0.7"/></svg>
<div style="position:absolute;left:1556px;top:595px;font-size:12px;line-height:16px;color:#2e3436;white-space:nowrap;"><span style="display:inline-block;width:11.60px;text-align:center"><span style="display:inline-block;transform:scaleX(0.97)">高</span></span><span style="display:inline-block;width:9.00px;text-align:center"><span style="display:inline-block;transform:scaleX(0.78)">さ</span></span>:</div>
<div style="position:absolute;left:1580px;top:587px;width:88px;height:33px;background:#fff;border:1px solid #d6d1cc;border-radius:5px;box-sizing:border-box"></div>
<div style="position:absolute;left:1617px;top:588px;width:1px;height:31px;background:#ebe8e5"></div>
<div style="position:absolute;left:1642px;top:588px;width:1px;height:31px;background:#ebe8e5"></div>
<div style="position:absolute;left:1587px;top:596px;font-size:12px;line-height:16px;color:#2e3436;white-space:nowrap;letter-spacing:-0.4px">0</div>
<div style="position:absolute;left:1622px;top:602px;width:15px;height:2px;background:#2e3436"></div>
<div style="position:absolute;left:1648px;top:602px;width:15px;height:2px;background:#2e3436"></div>
<div style="position:absolute;left:1654px;top:596px;width:2px;height:15px;background:#2e3436"></div>
<div style="position:absolute;left:1671px;top:595px;font-size:12px;line-height:16px;color:#2e3436;white-space:nowrap;">V:</div>
<div style="position:absolute;left:1682px;top:587px;width:88px;height:33px;background:#fff;border:1px solid #d6d1cc;border-radius:5px;box-sizing:border-box"></div>
<div style="position:absolute;left:1719px;top:588px;width:1px;height:31px;background:#ebe8e5"></div>
<div style="position:absolute;left:1744px;top:588px;width:1px;height:31px;background:#ebe8e5"></div>
<div style="position:absolute;left:1689px;top:596px;font-size:12px;line-height:16px;color:#2e3436;white-space:nowrap;letter-spacing:-0.4px">0</div>
<div style="position:absolute;left:1724px;top:602px;width:15px;height:2px;background:#2e3436"></div>
<div style="position:absolute;left:1750px;top:602px;width:15px;height:2px;background:#2e3436"></div>
<div style="position:absolute;left:1756px;top:596px;width:2px;height:15px;background:#2e3436"></div>
<svg style="position:absolute;left:1783px;top:595px" width="16" height="16" viewBox="0 0 16 16"><rect x="0.5" y="1" width="3.4" height="14" rx=".6" fill="#c8daee" stroke="#5a6470" stroke-width="0.8"/><rect x="5.5" y="1" width="4" height="14" rx=".6" fill="#c8daee" stroke="#5a6470" stroke-width="0.8"/><rect x="11.5" y="1" width="3.6" height="14" rx=".6" fill="#c8daee" stroke="#5a6470" stroke-width="0.8"/></svg>
<div style="position:absolute;left:1556px;top:650px;font-size:12px;line-height:16px;color:#2e3436;white-space:nowrap;"><span style="display:inline-block;width:11.60px;text-align:center"><span style="display:inline-block;transform:scaleX(0.97)">基</span></span><span style="display:inline-block;width:11.60px;text-align:center"><span style="display:inline-block;transform:scaleX(0.97)">準</span></span>:</div>
<div style="position:absolute;left:1591px;top:642px;width:112px;height:33px;background:linear-gradient(#f8f7f6,#edebe9);border:1px solid #cdc7c2;border-radius:5px;box-sizing:border-box"></div>
<div style="position:absolute;left:1598px;top:650px;font-size:12px;line-height:16px;color:#2e3436;white-space:nowrap;"><span style="display:inline-block;width:11.60px;text-align:center"><span style="display:inline-block;transform:scaleX(0.97)">最</span></span><span style="display:inline-block;width:11.60px;text-align:center"><span style="display:inline-block;transform:scaleX(0.97)">初</span></span><span style="display:inline-block;width:9.00px;text-align:center"><span style="display:inline-block;transform:scaleX(0.78)">の</span></span><span style="display:inline-block;width:11.60px;text-align:center"><span style="display:inline-block;transform:scaleX(0.97)">選</span></span><span style="display:inline-block;width:11.60px;text-align:center"><span style="display:inline-block;transform:scaleX(0.97)">択</span></span><span style="display:inline-block;width:11.60px;text-align:center"><span style="display:inline-block;transform:scaleX(0.97)">部</span></span><span style="display:inline-block;width:11.60px;text-align:center"><span style="display:inline-block;transform:scaleX(0.97)">分</span></span></div>
<svg style="position:absolute;left:1684px;top:654px" width="12" height="8" viewBox="0 0 12 8"><path d="M0.5 1h11L6 7z" fill="#2e3436"/></svg>
<svg style="position:absolute;left:1565px;top:685px" width="16" height="16" viewBox="0 0 16 16"><path d="M1 15q1.5-9 5-6.5T11 6q2-1 4-5" fill="none" stroke="#aaa" stroke-width=".8"/><path d="M1 8.5H15" stroke="#3030e0" stroke-width="1" fill="none"/><circle cx="2" cy="8.5" r="1.5" fill="#3a50f0"/><circle cx="8" cy="8.5" r="1.5" fill="#3a50f0"/><circle cx="14" cy="8.5" r="1.5" fill="#3a50f0"/></svg>
<svg style="position:absolute;left:1599px;top:685px" width="16" height="16" viewBox="0 0 16 16"><g transform="matrix(0 1 1 0 0 0)"><path d="M1 15q1.5-9 5-6.5T11 6q2-1 4-5" fill="none" stroke="#aaa" stroke-width=".8"/><path d="M1 8.5H15" stroke="#3030e0" stroke-width="1" fill="none"/><circle cx="2" cy="8.5" r="1.5" fill="#3a50f0"/><circle cx="8" cy="8.5" r="1.5" fill="#3a50f0"/><circle cx="14" cy="8.5" r="1.5" fill="#3a50f0"/></g></svg>
<svg style="position:absolute;left:1565px;top:747px" width="16" height="16" viewBox="0 0 16 16"><path d="M2 1.5h12M2 1.5v10M8 1.5v10M14 1.5v10" stroke="#e03a3a" stroke-width="1" fill="none"/><path d="M1 13q2 2 4 0t4-1 5 1" fill="none" stroke="#aaa" stroke-width=".8"/><rect x="0.3999999999999999" y="10.4" width="3.2" height="3.2" fill="#3a50f0"/><rect x="6.4" y="8.9" width="3.2" height="3.2" fill="#3a50f0"/><rect x="12.4" y="11.4" width="3.2" height="3.2" fill="#3a50f0"/></svg>
<svg style="position:absolute;left:1599px;top:747px" width="16" height="16" viewBox="0 0 16 16"><g transform="matrix(0 1 1 0 0 0)"><path d="M2 1.5h12M2 1.5v10M8 1.5v10M14 1.5v10" stroke="#e03a3a" stroke-width="1" fill="none"/><path d="M1 13q2 2 4 0t4-1 5 1" fill="none" stroke="#aaa" stroke-width=".8"/><rect x="0.3999999999999999" y="10.4" width="3.2" height="3.2" fill="#3a50f0"/><rect x="6.4" y="8.9" width="3.2" height="3.2" fill="#3a50f0"/><rect x="12.4" y="11.4" width="3.2" height="3.2" fill="#3a50f0"/></g></svg>
<div style="position:absolute;left:1647px;top:781px;width:167px;height:33px;background:linear-gradient(#f8f7f6,#edebe9);border:1px solid #cdc7c2;border-radius:5px;box-sizing:border-box;box-shadow:0 1px 1px rgba(0,0,0,0.12)"></div>
<div style="position:absolute;left:1711px;top:789px;font-size:12px;line-height:16px;color:#2e3436;white-space:nowrap;"><span style="display:inline-block;width:11.60px;text-align:center"><span style="display:inline-block;transform:scaleX(0.97)">配</span></span><span style="display:inline-block;width:11.60px;text-align:center"><span style="display:inline-block;transform:scaleX(0.97)">列</span></span>(A)</div>
<svg style="position:absolute;left:0;top:0" width="1928" height="1044"><rect x="1" y="992" width="16" height="16" fill="#fff"/><path d="M2 993L16 1007M16 993L2 1007" stroke="#7a1010" stroke-width="1.4"/><rect x="18.00" y="992" width="15.9" height="16" fill="#000000"/><rect x="35.08" y="992" width="15.9" height="16" fill="#1a1a1a"/><rect x="52.16" y="992" width="15.9" height="16" fill="#333333"/><rect x="69.24" y="992" width="15.9" height="16" fill="#4d4d4d"/><rect x="86.32" y="992" width="15.9" height="16" fill="#666666"/><rect x="103.40" y="992" width="15.9" height="16" fill="#808080"/><rect x="120.48" y="992" width="15.9" height="16" fill="#999999"/><rect x="137.56" y="992" width="15.9" height="16" fill="#b3b3b3"/><rect x="154.64" y="992" width="15.9" height="16" fill="#cccccc"/><rect x="171.72" y="992" width="15.9" height="16" fill="#e6e6e6"/><rect x="188.80" y="992" width="15.9" height="16" fill="#ececec"/><rect x="205.88" y="992" width="15.9" height="16" fill="#f2f2f2"/><rect x="222.96" y="992" width="15.9" height="16" fill="#f9f9f9"/><rect x="240.04" y="992" width="15.9" height="16" fill="#ffffff"/><rect x="257.12" y="992" width="15.9" height="16" fill="#800000"/><rect x="274.20" y="992" width="15.9" height="16" fill="#ff0000"/><rect x="291.28" y="992" width="15.9" height="16" fill="#808000"/><rect x="308.36" y="992" width="15.9" height="16" fill="#ffff00"/><rect x="325.44" y="992" width="15.9" height="16" fill="#008000"/><rect x="342.52" y="992" width="15.9" height="16" fill="#00ff00"/><rect x="359.60" y="992" width="15.9" height="16" fill="#008080"/><rect x="376.68" y="992" width="15.9" height="16" fill="#00ffff"/><rect x="393.76" y="992" width="15.9" height="16" fill="#000080"/><rect x="410.84" y="992" width="15.9" height="16" fill="#0000ff"/><rect x="427.92" y="992" width="15.9" height="16" fill="#800080"/><rect x="445.00" y="992" width="15.9" height="16" fill="#ff00ff"/><rect x="462.08" y="992" width="15.9" height="16" fill="#2b0000"/><rect x="479.16" y="992" width="15.9" height="16" fill="#550000"/><rect x="496.24" y="992" width="15.9" height="16" fill="#800000"/><rect x="513.32" y="992" width="15.9" height="16" fill="#aa0000"/><rect x="530.40" y="992" width="15.9" height="16" fill="#d40000"/><rect x="547.48" y="992" width="15.9" height="16" fill="#ff0000"/><rect x="564.56" y="992" width="15.9" height="16" fill="#ff2a2a"/><rect x="581.64" y="992" width="15.9" height="16" fill="#ff5555"/><rect x="598.72" y="992" width="15.9" height="16" fill="#ff8080"/><rect x="615.80" y="992" width="15.9" height="16" fill="#ffaaaa"/><rect x="632.88" y="992" width="15.9" height="16" fill="#ffd5d5"/><rect x="649.96" y="992" width="15.9" height="16" fill="#280b0b"/><rect x="667.04" y="992" width="15.9" height="16" fill="#501616"/><rect x="684.12" y="992" width="15.9" height="16" fill="#782121"/><rect x="701.20" y="992" width="15.9" height="16" fill="#a02c2c"/><rect x="718.28" y="992" width="15.9" height="16" fill="#c83737"/><rect x="735.36" y="992" width="15.9" height="16" fill="#d35f5f"/><rect x="752.44" y="992" width="15.9" height="16" fill="#de8787"/><rect x="769.52" y="992" width="15.9" height="16" fill="#e9afaf"/><rect x="786.60" y="992" width="15.9" height="16" fill="#f4d7d7"/><rect x="803.68" y="992" width="15.9" height="16" fill="#241c1c"/><rect x="820.76" y="992" width="15.9" height="16" fill="#483737"/><rect x="837.84" y="992" width="15.9" height="16" fill="#6c5353"/><rect x="854.92" y="992" width="15.9" height="16" fill="#916f6f"/><rect x="872.00" y="992" width="15.9" height="16" fill="#ac9393"/><rect x="889.08" y="992" width="15.9" height="16" fill="#c8b7b7"/><rect x="906.16" y="992" width="15.9" height="16" fill="#e3dbdb"/><rect x="923.24" y="992" width="15.9" height="16" fill="#2b1100"/><rect x="940.32" y="992" width="15.9" height="16" fill="#552200"/><rect x="957.40" y="992" width="15.9" height="16" fill="#803300"/><rect x="974.48" y="992" width="15.9" height="16" fill="#aa4400"/><rect x="991.56" y="992" width="15.9" height="16" fill="#d45500"/><rect x="1008.64" y="992" width="15.9" height="16" fill="#ff6600"/><rect x="1025.72" y="992" width="15.9" height="16" fill="#ff7f2a"/><rect x="1042.80" y="992" width="15.9" height="16" fill="#ff9955"/><rect x="1059.88" y="992" width="15.9" height="16" fill="#ffb380"/><rect x="1076.96" y="992" width="15.9" height="16" fill="#ffccaa"/><rect x="1094.04" y="992" width="15.9" height="16" fill="#ffe6d5"/><rect x="1111.12" y="992" width="15.9" height="16" fill="#28170b"/><rect x="1128.20" y="992" width="15.9" height="16" fill="#502d16"/><rect x="1145.28" y="992" width="15.9" height="16" fill="#784421"/><rect x="1162.36" y="992" width="15.9" height="16" fill="#a05a2c"/><rect x="1179.44" y="992" width="15.9" height="16" fill="#c87137"/><rect x="1196.52" y="992" width="15.9" height="16" fill="#d38d5f"/><rect x="1213.60" y="992" width="15.9" height="16" fill="#deaa87"/><rect x="1230.68" y="992" width="15.9" height="16" fill="#e9c6af"/><rect x="1247.76" y="992" width="15.9" height="16" fill="#f4e3d7"/><rect x="1264.84" y="992" width="15.9" height="16" fill="#241f1c"/><rect x="1281.92" y="992" width="15.9" height="16" fill="#483e37"/><rect x="1299.00" y="992" width="15.9" height="16" fill="#6c5d53"/><rect x="1316.08" y="992" width="15.9" height="16" fill="#917c6f"/><rect x="1333.16" y="992" width="15.9" height="16" fill="#ac9d93"/><rect x="1350.24" y="992" width="15.9" height="16" fill="#c8beb7"/><rect x="1367.32" y="992" width="15.9" height="16" fill="#e3dedb"/><rect x="1384.40" y="992" width="15.9" height="16" fill="#2b2200"/><rect x="1401.48" y="992" width="15.9" height="16" fill="#554400"/><rect x="1418.56" y="992" width="15.9" height="16" fill="#806600"/><rect x="1435.64" y="992" width="15.9" height="16" fill="#aa8800"/><rect x="1452.72" y="992" width="15.9" height="16" fill="#d4aa00"/><rect x="1469.80" y="992" width="15.9" height="16" fill="#ffcc00"/><rect x="1486.88" y="992" width="15.9" height="16" fill="#ffd42a"/><rect x="1503.96" y="992" width="15.9" height="16" fill="#ffdd55"/><rect x="1521.04" y="992" width="15.9" height="16" fill="#ffe680"/><rect x="1538.12" y="992" width="15.9" height="16" fill="#ffeeaa"/><rect x="1555.20" y="992" width="15.9" height="16" fill="#fff6d5"/><rect x="1572.28" y="992" width="15.9" height="16" fill="#28220b"/><rect x="1589.36" y="992" width="15.9" height="16" fill="#504416"/><rect x="1606.44" y="992" width="15.9" height="16" fill="#786721"/><rect x="1623.52" y="992" width="15.9" height="16" fill="#a0892c"/><rect x="1640.60" y="992" width="15.9" height="16" fill="#c8ab37"/><rect x="1657.68" y="992" width="15.9" height="16" fill="#d3bc5f"/><rect x="1674.76" y="992" width="15.9" height="16" fill="#decd87"/><rect x="1691.84" y="992" width="15.9" height="16" fill="#e9ddaf"/><rect x="1708.92" y="992" width="15.9" height="16" fill="#f4eed7"/><rect x="1726.00" y="992" width="15.9" height="16" fill="#24221c"/><rect x="1743.08" y="992" width="15.9" height="16" fill="#484537"/><rect x="1760.16" y="992" width="15.9" height="16" fill="#6c6753"/><rect x="1777.24" y="992" width="15.9" height="16" fill="#918a6f"/><rect x="1794.32" y="992" width="15.9" height="16" fill="#aca793"/><rect x="1811.40" y="992" width="15.9" height="16" fill="#c8c4b7"/><rect x="1828.48" y="992" width="15.9" height="16" fill="#e3e1db"/></svg>
<svg style="position:absolute;left:1852px;top:988px" width="17" height="12" viewBox="0 0 17 12"><path d="M2 9.5L8.5 3 15 9.5" fill="none" stroke="#2e3436" stroke-width="1.8"/></svg>
<svg style="position:absolute;left:1882px;top:988px" width="17" height="12" viewBox="0 0 17 12"><path d="M2 2.5L8.5 9 15 2.5" fill="none" stroke="#2e3436" stroke-width="1.8"/></svg>
<div style="position:absolute;left:1905px;top:983px;width:23px;height:27px;background:linear-gradient(#f8f7f6,#edebe9);border:1px solid #cdc7c2;border-radius:5px;box-sizing:border-box"></div>
<svg style="position:absolute;left:1909px;top:988px" width="16" height="16" viewBox="0 0 16 16"><path d="M1 3h14M1 8h14M1 13h14" stroke="#2e3436" stroke-width="1.8"/></svg>
<div style="position:absolute;left:20px;top:1010px;font-size:12px;line-height:16px;color:#2e3436;white-space:nowrap;"><span style="display:inline-block;width:9.00px;text-align:center"><span style="display:inline-block;transform:scaleX(0.78)">フ</span></span><span style="display:inline-block;width:7.20px;text-align:center"><span style="display:inline-block;transform:scaleX(0.62)">ィ</span></span><span style="display:inline-block;width:9.00px;text-align:center"><span style="display:inline-block;transform:scaleX(0.78)">ル</span></span>:</div>
<div style="position:absolute;left:2px;top:1027px;font-size:12px;line-height:16px;color:#2e3436;white-space:nowrap;"><span style="display:inline-block;width:9.00px;text-align:center"><span style="display:inline-block;transform:scaleX(0.78)">ス</span></span><span style="display:inline-block;width:9.00px;text-align:center"><span style="display:inline-block;transform:scaleX(0.78)">ト</span></span><span style="display:inline-block;width:9.00px;text-align:center"><span style="display:inline-block;transform:scaleX(0.78)">ロ</span></span><span style="display:inline-block;width:9.50px;text-align:center"><span style="display:inline-block;transform:scaleX(0.8)">ー</span></span><span style="display:inline-block;width:9.00px;text-align:center"><span style="display:inline-block;transform:scaleX(0.78)">ク</span></span>:</div>
<div style="position:absolute;left:64px;top:1010px;width:51px;height:16px;background:#ffe000;border-radius:3px"></div>
<div style="position:absolute;left:67px;top:1027px;font-size:12px;line-height:16px;color:#2e3436;white-space:nowrap;font-weight:bold"><span style="display:inline-block;width:9.00px;text-align:center"><span style="display:inline-block;transform:scaleX(0.78)">ア</span></span><span style="display:inline-block;width:9.00px;text-align:center"><span style="display:inline-block;transform:scaleX(0.78)">ン</span></span><span style="display:inline-block;width:9.00px;text-align:center"><span style="display:inline-block;transform:scaleX(0.78)">セ</span></span><span style="display:inline-block;width:7.20px;text-align:center"><span style="display:inline-block;transform:scaleX(0.62)">ッ</span></span><span style="display:inline-block;width:9.00px;text-align:center"><span style="display:inline-block;transform:scaleX(0.78)">ト</span></span></div>
<div style="position:absolute;left:128px;top:1028px;font-size:11px;line-height:16px;color:#2e3436;white-space:nowrap;">1.59</div>
<div style="position:absolute;left:159px;top:1018px;font-size:12px;line-height:16px;color:#2e3436;white-space:nowrap;">O:</div>
<div style="position:absolute;left:173px;top:1010px;width:71px;height:34px;background:#fff;border:1px solid #d6d1cc;border-radius:5px;box-sizing:border-box"></div>
<div style="position:absolute;left:209px;top:1011px;width:1px;height:32px;background:#ebe8e5"></div>
<div style="position:absolute;left:227px;top:1011px;width:1px;height:32px;background:#ebe8e5"></div>
<div style="position:absolute;left:180px;top:1019px;font-size:12px;line-height:16px;color:#2e3436;white-space:nowrap;">100</div>
<div style="position:absolute;left:212px;top:1026px;width:13px;height:2px;background:#2e3436"></div>
<div style="position:absolute;left:229px;top:1026px;width:13px;height:2px;background:#c8c8c8"></div>
<div style="position:absolute;left:235px;top:1020px;width:2px;height:14px;background:#c8c8c8"></div>
<div style="position:absolute;left:262px;top:1018px;width:3px;height:17px;background:#5a8fd8"></div>
<div style="position:absolute;left:271px;top:1018px;font-size:12px;line-height:16px;color:#2e3436;white-space:nowrap;">Layer 1</div>
<svg style="position:absolute;left:327px;top:1019px" width="20" height="14" viewBox="0 0 20 14"><path d="M1 7q9-9 18 0-9 9-18 0z" fill="#111"/><circle cx="10" cy="7" r="3.2" fill="#fff"/><circle cx="10" cy="7" r="2" fill="#111"/><path d="M3 2l2 2M10 0v2.5M17 2l-2 2" stroke="#111" stroke-width="1.2"/></svg>
<svg style="position:absolute;left:364px;top:1018px" width="16" height="16" viewBox="0 0 16 16"><defs><linearGradient id="ulg" x1="0" y1="0" x2="1" y2="1"><stop offset=".2" stop-color="#ffffff"/><stop offset="1" stop-color="#f2d840"/></linearGradient></defs><g transform="rotate(-8 8 11)"><rect x="2" y="7" width="11.5" height="8.5" rx=".8" fill="url(#ulg)" stroke="#333" stroke-width="1.2"/><path d="M2.5 2.5a4.2 4.2 0 0 1 7.5 1.5V7" fill="none" stroke="#333" stroke-width="1.3"/><path d="M6.8 10l1.4-.3.6 3-1 .2z" fill="#111"/></g></svg>
<div style="position:absolute;left:390px;top:1016px;width:1px;height:22px;background:#dedbd8"></div>
<div style="position:absolute;left:399px;top:1018px;font-size:12px;line-height:16px;color:#2e3436;white-space:nowrap;"><b>Alt:</b> <span style="display:inline-block;width:9.00px;text-align:center"><span style="display:inline-block;transform:scaleX(0.78)">パ</span></span><span style="display:inline-block;width:9.00px;text-align:center"><span style="display:inline-block;transform:scaleX(0.78)">ス</span></span><span style="display:inline-block;width:9.00px;text-align:center"><span style="display:inline-block;transform:scaleX(0.78)">を</span></span><span style="display:inline-block;width:9.00px;text-align:center"><span style="display:inline-block;transform:scaleX(0.78)">タ</span></span><span style="display:inline-block;width:7.20px;text-align:center"><span style="display:inline-block;transform:scaleX(0.62)">ッ</span></span><span style="display:inline-block;width:9.00px;text-align:center"><span style="display:inline-block;transform:scaleX(0.78)">チ</span></span><span style="display:inline-block;width:9.00px;text-align:center"><span style="display:inline-block;transform:scaleX(0.78)">し</span></span><span style="display:inline-block;width:9.00px;text-align:center"><span style="display:inline-block;transform:scaleX(0.78)">て</span></span><span style="display:inline-block;width:11.60px;text-align:center"><span style="display:inline-block;transform:scaleX(0.97)">選</span></span><span style="display:inline-block;width:11.60px;text-align:center"><span style="display:inline-block;transform:scaleX(0.97)">択</span></span>, <span style="display:inline-block;width:9.00px;text-align:center"><span style="display:inline-block;transform:scaleX(0.78)">オ</span></span><span style="display:inline-block;width:9.00px;text-align:center"><span style="display:inline-block;transform:scaleX(0.78)">ブ</span></span><span style="display:inline-block;width:9.00px;text-align:center"><span style="display:inline-block;transform:scaleX(0.78)">ジ</span></span><span style="display:inline-block;width:7.20px;text-align:center"><span style="display:inline-block;transform:scaleX(0.62)">ェ</span></span><span style="display:inline-block;width:9.00px;text-align:center"><span style="display:inline-block;transform:scaleX(0.78)">ク</span></span><span style="display:inline-block;width:9.00px;text-align:center"><span style="display:inline-block;transform:scaleX(0.78)">ト</span></span><span style="display:inline-block;width:9.00px;text-align:center"><span style="display:inline-block;transform:scaleX(0.78)">を</span></span><span style="display:inline-block;width:11.60px;text-align:center"><span style="display:inline-block;transform:scaleX(0.97)">順</span></span><span style="display:inline-block;width:9.00px;text-align:center"><span style="display:inline-block;transform:scaleX(0.78)">に</span></span><span style="display:inline-block;width:11.60px;text-align:center"><span style="display:inline-block;transform:scaleX(0.97)">選</span></span><span style="display:inline-block;width:11.60px;text-align:center"><span style="display:inline-block;transform:scaleX(0.97)">択</span></span>, <span style="display:inline-block;width:11.60px;text-align:center"><span style="display:inline-block;transform:scaleX(0.97)">強</span></span><span style="display:inline-block;width:11.60px;text-align:center"><span style="display:inline-block;transform:scaleX(0.97)">制</span></span><span style="display:inline-block;width:9.00px;text-align:center"><span style="display:inline-block;transform:scaleX(0.78)">ド</span></span><span style="display:inline-block;width:9.00px;text-align:center"><span style="display:inline-block;transform:scaleX(0.78)">ラ</span></span><span style="display:inline-block;width:7.20px;text-align:center"><span style="display:inline-block;transform:scaleX(0.62)">ッ</span></span><span style="display:inline-block;width:9.00px;text-align:center"><span style="display:inline-block;transform:scaleX(0.78)">グ</span></span></div>
<div style="position:absolute;left:1623px;top:1010px;width:1px;height:34px;background:#dedbd8"></div>
<div style="position:absolute;left:1633px;top:1010px;font-size:12px;line-height:16px;color:#2e3436;white-space:nowrap;">X:</div>
<div style="position:absolute;left:1655px;top:1010px;font-size:12px;line-height:16px;color:#2e3436;white-space:nowrap;">1958.45</div>
<div style="position:absolute;left:1633px;top:1027px;font-size:12px;line-height:16px;color:#2e3436;white-space:nowrap;">Y:</div>
<div style="position:absolute;left:1655px;top:1027px;font-size:12px;line-height:16px;color:#2e3436;white-space:nowrap;">1282.17</div>
<div style="position:absolute;left:1703px;top:1018px;font-size:12px;line-height:16px;color:#2e3436;white-space:nowrap;">Z:</div>
<div style="position:absolute;left:1714px;top:1010px;width:87px;height:33px;background:#fff;border:1px solid #d6d1cc;border-radius:5px;box-sizing:border-box"></div>
<div style="position:absolute;left:1756px;top:1011px;width:1px;height:31px;background:#ebe8e5"></div>
<div style="position:absolute;left:1777px;top:1011px;width:1px;height:31px;background:#ebe8e5"></div>
<div style="position:absolute;left:1721px;top:1019px;font-size:12px;line-height:16px;color:#2e3436;white-space:nowrap;letter-spacing:-0.4px">50%</div>
<div style="position:absolute;left:1759px;top:1026px;width:15px;height:2px;background:#2e3436"></div>
<div style="position:absolute;left:1782px;top:1026px;width:15px;height:2px;background:#2e3436"></div>
<div style="position:absolute;left:1788px;top:1019px;width:2px;height:15px;background:#2e3436"></div>
<div style="position:absolute;left:1811px;top:1018px;font-size:12px;line-height:16px;color:#2e3436;white-space:nowrap;">R:</div>
<div style="position:absolute;left:1822px;top:1010px;width:94px;height:33px;background:#fff;border:1px solid #d6d1cc;border-radius:5px;box-sizing:border-box"></div>
<div style="position:absolute;left:1869px;top:1011px;width:1px;height:31px;background:#ebe8e5"></div>
<div style="position:absolute;left:1891px;top:1011px;width:1px;height:31px;background:#ebe8e5"></div>
<div style="position:absolute;left:1829px;top:1019px;font-size:12px;line-height:16px;color:#2e3436;white-space:nowrap;letter-spacing:-0.4px">0.00°</div>
<div style="position:absolute;left:1872px;top:1026px;width:15px;height:2px;background:#2e3436"></div>
<div style="position:absolute;left:1896px;top:1026px;width:15px;height:2px;background:#2e3436"></div>
<div style="position:absolute;left:1902px;top:1019px;width:2px;height:15px;background:#2e3436"></div></body></html>
